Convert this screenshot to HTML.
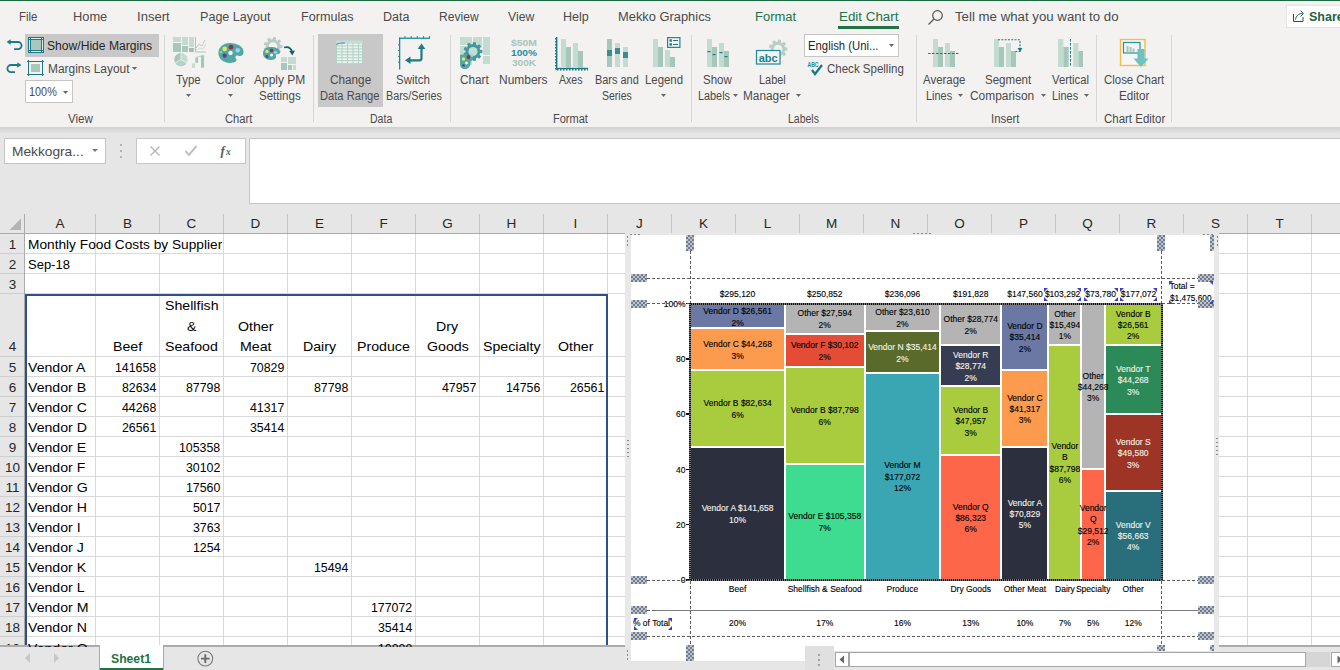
<!DOCTYPE html>
<html><head><meta charset="utf-8"><style>
html,body{margin:0;padding:0;width:1340px;height:670px;overflow:hidden;background:#f3f2f1}
.r{position:absolute;display:block}
.t{position:absolute;white-space:pre;font-family:"Liberation Sans",sans-serif;transform-origin:0 50%}
</style></head><body>
<div class="r" style="left:0px;top:0px;width:1340px;height:127px;background:#f3f2f1;"></div>
<div class="r" style="left:0px;top:0px;width:1340px;height:1px;background:#1e6b43;"></div>
<div class="r" style="left:0px;top:127px;width:1340px;height:87px;background:#e6e6e6;"></div>
<div class="r" style="left:0px;top:127px;width:1340px;height:7px;background:linear-gradient(#d0d0d0,#e6e6e6);"></div>
<div class="t" style="left:19.30px;top:11.00px;font-size:12.5px;line-height:12.5px;color:#4a4a4a;font-weight:normal;transform:scaleX(0.9129);">File</div>
<div class="t" style="left:73.40px;top:11.00px;font-size:12.5px;line-height:12.5px;color:#4a4a4a;font-weight:normal;transform:scaleX(1.0257);">Home</div>
<div class="t" style="left:137.30px;top:11.00px;font-size:12.5px;line-height:12.5px;color:#4a4a4a;font-weight:normal;transform:scaleX(1.0459);">Insert</div>
<div class="t" style="left:200.10px;top:11.00px;font-size:12.5px;line-height:12.5px;color:#4a4a4a;font-weight:normal;transform:scaleX(1.0057);">Page Layout</div>
<div class="t" style="left:300.90px;top:11.00px;font-size:12.5px;line-height:12.5px;color:#4a4a4a;font-weight:normal;transform:scaleX(1.0097);">Formulas</div>
<div class="t" style="left:383.00px;top:11.00px;font-size:12.5px;line-height:12.5px;color:#4a4a4a;font-weight:normal;transform:scaleX(1.0036);">Data</div>
<div class="t" style="left:439.30px;top:11.00px;font-size:12.5px;line-height:12.5px;color:#4a4a4a;font-weight:normal;transform:scaleX(0.9683);">Review</div>
<div class="t" style="left:507.50px;top:11.00px;font-size:12.5px;line-height:12.5px;color:#4a4a4a;font-weight:normal;transform:scaleX(0.9786);">View</div>
<div class="t" style="left:562.50px;top:11.00px;font-size:12.5px;line-height:12.5px;color:#4a4a4a;font-weight:normal;transform:scaleX(1.0032);">Help</div>
<div class="t" style="left:618.30px;top:11.00px;font-size:12.5px;line-height:12.5px;color:#4a4a4a;font-weight:normal;transform:scaleX(1.0298);">Mekko Graphics</div>
<div class="t" style="left:755.10px;top:11.00px;font-size:12.5px;line-height:12.5px;color:#217346;font-weight:normal;transform:scaleX(1.0380);">Format</div>
<div class="t" style="left:838.50px;top:11.00px;font-size:12.5px;line-height:12.5px;color:#217346;font-weight:normal;transform:scaleX(1.0703);">Edit Chart</div>
<div class="r" style="left:838px;top:26px;width:61px;height:3px;background:#217346;"></div>
<div class="t" style="left:954.50px;top:11.00px;font-size:12.5px;line-height:12.5px;color:#4a4a4a;font-weight:normal;transform:scaleX(1.0600);">Tell me what you want to do</div>
<svg class="r" style="left:927px;top:9px;" width="17" height="17" viewBox="0 0 17 17"><circle cx="10.5" cy="6.5" r="4.8" fill="none" stroke="#555" stroke-width="1.2"/><line x1="7" y1="10" x2="1.5" y2="15.5" stroke="#555" stroke-width="1.3"/></svg>
<div class="r" style="left:1286px;top:5px;width:59px;height:22.5px;background:#ffffff;border:1px solid #e4e4e4;box-sizing:border-box;"></div>
<svg class="r" style="left:1292px;top:9px;" width="14" height="14" viewBox="0 0 14 14"><path d="M1.5 5 V12.5 H11 V8" fill="none" stroke="#1e5e40" stroke-width="1"/><path d="M3.5 10.5 C4 7 6.5 4.5 10.5 4.5" fill="none" stroke="#1e5e40" stroke-width="1"/><path d="M8.5 1.5 L11.5 4.5 L8.5 7.5" fill="none" stroke="#1e5e40" stroke-width="1"/></svg>
<div class="t" style="left:1309.00px;top:11.00px;font-size:12.5px;line-height:12.5px;color:#1e6244;font-weight:bold;">Share</div>
<div class="r" style="left:163.5px;top:35px;width:1.0px;height:87px;background:#d6d6d6;"></div>
<div class="r" style="left:313px;top:35px;width:1px;height:87px;background:#d6d6d6;"></div>
<div class="r" style="left:449.6px;top:35px;width:1.0px;height:87px;background:#d6d6d6;"></div>
<div class="r" style="left:690.7px;top:35px;width:1.0px;height:87px;background:#d6d6d6;"></div>
<div class="r" style="left:915.5px;top:35px;width:1.0px;height:87px;background:#d6d6d6;"></div>
<div class="r" style="left:1096.4px;top:35px;width:1.0px;height:87px;background:#d6d6d6;"></div>
<div class="r" style="left:1171.3px;top:35px;width:1.0px;height:87px;background:#d6d6d6;"></div>
<div class="r" style="left:25px;top:34px;width:134px;height:23px;background:#c8c8c8;"></div>
<svg class="r" style="left:6px;top:39px;" width="17" height="12" viewBox="0 0 17 12"><path d="M3.5 3 H12 A3.6 3.6 0 0 1 12 10.2 H8" fill="none" stroke="#1c7a86" stroke-width="1.8"/><path d="M0.6 3 L4.6 0.3 V5.7 Z" fill="#1c7a86"/></svg>
<svg class="r" style="left:6px;top:62px;" width="17" height="12" viewBox="0 0 17 12"><path d="M12.5 3 H5 A3.6 3.6 0 0 0 5 10.2 H9" fill="none" stroke="#1c7a86" stroke-width="1.8"/><path d="M15.4 3 L11.4 0.3 V5.7 Z" fill="#1c7a86"/></svg>
<svg class="r" style="left:28px;top:37px;" width="16" height="16" viewBox="0 0 16 16"><rect x="0.5" y="0.5" width="15" height="15" fill="#d7eeee" stroke="#1c7a86" stroke-width="1"/><rect x="3" y="3" width="10" height="10" fill="#a8c8bb"/><line x1="0" y1="2.5" x2="16" y2="2.5" stroke="#1c7a86" stroke-width="1"/><line x1="0" y1="13.5" x2="16" y2="13.5" stroke="#1c7a86" stroke-width="1"/><line x1="2.5" y1="0" x2="2.5" y2="16" stroke="#1c7a86" stroke-width="1"/><line x1="13.5" y1="0" x2="13.5" y2="16" stroke="#1c7a86" stroke-width="1"/></svg>
<svg class="r" style="left:27px;top:60px;" width="17" height="16" viewBox="0 0 17 16"><rect x="4" y="4" width="9" height="8" fill="#a8c8bb"/><line x1="0" y1="1.5" x2="17" y2="1.5" stroke="#1c7a86" stroke-width="1"/><line x1="0" y1="14.5" x2="17" y2="14.5" stroke="#1c7a86" stroke-width="1"/><line x1="1.5" y1="0" x2="1.5" y2="16" stroke="#1c7a86" stroke-width="1"/><line x1="15.5" y1="0" x2="15.5" y2="16" stroke="#1c7a86" stroke-width="1"/></svg>
<div class="t" style="left:47.00px;top:40.00px;font-size:12px;line-height:12px;color:#262626;font-weight:normal;transform:scaleX(1.0092);">Show/Hide Margins</div>
<div class="t" style="left:47.50px;top:63.00px;font-size:12px;line-height:12px;color:#4a4a4a;font-weight:normal;transform:scaleX(0.9933);">Margins Layout</div>
<svg class="r" style="left:132.2px;top:67.0px;" width="5" height="3" viewBox="0 0 5 3"><path d="M0 0 H5 L2.5 3 Z" fill="#666"/></svg>
<div class="r" style="left:25px;top:80px;width:48px;height:23px;background:#ffffff;border:1px solid #c6c6c6;box-sizing:border-box;"></div>
<div class="t" style="left:28.50px;top:86.00px;font-size:12px;line-height:12px;color:#4a4a4a;font-weight:normal;transform:scaleX(0.9054);">100%</div>
<svg class="r" style="left:62.5px;top:90.5px;" width="5" height="3" viewBox="0 0 5 3"><path d="M0 0 H5 L2.5 3 Z" fill="#666"/></svg>
<div class="t" style="left:68.00px;top:113.00px;font-size:12px;line-height:12px;color:#4a4a4a;font-weight:normal;transform:scaleX(0.9614);">View</div>
<svg class="r" style="left:172px;top:36px;" width="34" height="34" viewBox="0 0 34 34"><rect x="1" y="1" width="8" height="5" fill="#c3dbd0"/><rect x="1" y="7" width="8" height="9" fill="#a6c8ba"/><rect x="10" y="1" width="6" height="8" fill="#c3dbd0"/><rect x="10" y="10" width="6" height="6" fill="#a6c8ba"/><rect x="17" y="1" width="5" height="10" fill="#c3dbd0"/><rect x="17" y="12" width="5" height="4" fill="#9fbfb1"/><path d="M23.5 1 V16 H34" fill="none" stroke="#a6c8ba" stroke-width="1"/><path d="M24 12 L27 8 L30 10 L33 4" fill="none" stroke="#a6c8ba" stroke-width="0.8"/><path d="M24 14 L28 12 L31 13 L34 8" fill="none" stroke="#c3dbd0" stroke-width="0.8"/><circle cx="9" cy="23.6" r="6.6" fill="#c3dbd0"/><path d="M9 23.6 L9 17 A6.6 6.6 0 0 0 3.3 26.9 Z" fill="#a6c8ba"/><path d="M9 23.6 L3.3 26.9 A6.6 6.6 0 0 0 14.7 26.9 Z" fill="#b3d1c4"/><path d="M9 17 V23.6 L3.3 26.9 M9 23.6 L14.7 26.9" stroke="#f3f2f1" stroke-width="0.8" fill="none"/><rect x="20" y="27.3" width="3" height="4.5" fill="#c3dbd0"/><rect x="23.3" y="21.3" width="2.8" height="5.5" fill="#a6c8ba"/><path d="M23.5 21 L29 19.3 V21 Z" fill="#c3dbd0"/><rect x="29" y="19.3" width="3.1" height="12.5" fill="#a6c8ba"/></svg>
<div class="t" style="left:176.40px;top:74.00px;font-size:12px;line-height:12px;color:#4a4a4a;font-weight:normal;transform:scaleX(0.9456);">Type</div>
<svg class="r" style="left:186.0px;top:94.0px;" width="5" height="3" viewBox="0 0 5 3"><path d="M0 0 H5 L2.5 3 Z" fill="#666"/></svg>
<svg class="r" style="left:216px;top:41px;transform:scale(0.9);transform-origin:15px 12px" width="30" height="24" viewBox="0 0 30 24"><path d="M14 1 C22 1 29 5 29 11 C29 15 26 16 23 15 C20 14 19 17 21 19 C22 21 19 23 14 23 C6 23 1 18 1 12 C1 6 6 1 14 1 Z" fill="#4fa8a2"/><circle cx="8" cy="7.5" r="2.6" fill="#e8e36a"/><circle cx="15" cy="5.5" r="2.6" fill="#9c2f3a"/><circle cx="22.5" cy="9" r="2.6" fill="#8fd5ef"/><circle cx="14.5" cy="12" r="2.4" fill="#ffffff"/><circle cx="8" cy="15" r="2.4" fill="#6a3a8c"/><circle cx="3.8" cy="11" r="1.6" fill="#8ed37f"/></svg>
<div class="t" style="left:216.40px;top:74.00px;font-size:12px;line-height:12px;color:#4a4a4a;font-weight:normal;transform:scaleX(0.9969);">Color</div>
<svg class="r" style="left:228.0px;top:94.0px;" width="5" height="3" viewBox="0 0 5 3"><path d="M0 0 H5 L2.5 3 Z" fill="#666"/></svg>
<svg class="r" style="left:262px;top:36px;" width="36" height="34" viewBox="0 0 36 34"><path d="M17.99 8.79 L20.39 9.05 L20.39 11.95 L17.99 12.21 L17.46 13.68 L19.13 15.42 L17.26 17.65 L15.26 16.31 L13.90 17.09 L14.06 19.49 L11.20 20.00 L10.53 17.68 L8.99 17.41 L7.56 19.36 L5.05 17.90 L6.02 15.70 L5.01 14.50 L2.68 15.08 L1.68 12.35 L3.84 11.28 L3.84 9.72 L1.68 8.65 L2.68 5.92 L5.01 6.50 L6.02 5.30 L5.05 3.10 L7.56 1.64 L8.99 3.59 L10.53 3.32 L11.20 1.00 L14.06 1.51 L13.90 3.91 L15.26 4.69 L17.26 3.35 L19.13 5.58 L17.46 7.32 Z" fill="#b7cdc4"/><circle cx="11" cy="10.5" r="4.2" fill="#f3f2f1"/><path d="M8.5 11 C14 11 18 13 18 16 C18 18 16 18.5 15 18 C14 18 13.5 19 14 20 C14.5 22.5 12 24 8.5 24 C4 24 1 21 1 17.5 C1 13.5 4 11 8.5 11 Z" fill="#4fa8a2"/><circle cx="5" cy="15.5" r="1.7" fill="#e8e36a"/><circle cx="9.5" cy="14.5" r="1.8" fill="#9c2f3a"/><circle cx="13.5" cy="16.3" r="1.6" fill="#8fd5ef"/><circle cx="9.5" cy="19" r="1.5" fill="#fff"/><circle cx="5" cy="20.5" r="1.4" fill="#6a3a8c"/><path d="M22 11.5 C26 10.5 29 12 30 16" fill="none" stroke="#1b5e6a" stroke-width="1.8"/><path d="M27.3 15 L30.3 19.5 L33 14.5 Z" fill="#1b5e6a"/><rect x="19" y="21" width="6" height="5" fill="#c3dbd0"/><rect x="26" y="21" width="8" height="7" fill="#c3dbd0"/><rect x="19" y="27" width="6" height="7" fill="#a6c8ba"/><rect x="26" y="29" width="4" height="5" fill="#a6c8ba"/><rect x="31" y="29" width="3" height="5" fill="#c3dbd0"/></svg>
<div class="t" style="left:254.30px;top:74.00px;font-size:12px;line-height:12px;color:#4a4a4a;font-weight:normal;transform:scaleX(0.9969);">Apply PM</div>
<div class="t" style="left:259.30px;top:90.00px;font-size:12px;line-height:12px;color:#4a4a4a;font-weight:normal;transform:scaleX(0.9617);">Settings</div>
<div class="t" style="left:224.50px;top:113.00px;font-size:12px;line-height:12px;color:#4a4a4a;font-weight:normal;transform:scaleX(0.9304);">Chart</div>
<div class="r" style="left:318px;top:34px;width:65px;height:73px;background:#c8c8c8;"></div>
<svg class="r" style="left:336px;top:40px;" width="28" height="25" viewBox="0 0 28 25"><rect x="0" y="0.5" width="27" height="23" fill="#b3d2c7"/><rect x="0" y="0.5" width="27" height="2.5" fill="#c5ddd3"/><rect x="1" y="3.50" width="4.5" height="1.9" fill="#e9f4ef"/><rect x="6.5" y="3.50" width="4.5" height="1.9" fill="#e9f4ef"/><rect x="12" y="3.50" width="4.5" height="1.9" fill="#e9f4ef"/><rect x="17.5" y="3.50" width="4.5" height="1.9" fill="#e9f4ef"/><rect x="23" y="3.50" width="3" height="1.9" fill="#e9f4ef"/><rect x="1" y="6.45" width="4.5" height="1.9" fill="#e9f4ef"/><rect x="6.5" y="6.45" width="4.5" height="1.9" fill="#e9f4ef"/><rect x="12" y="6.45" width="4.5" height="1.9" fill="#e9f4ef"/><rect x="17.5" y="6.45" width="4.5" height="1.9" fill="#e9f4ef"/><rect x="23" y="6.45" width="3" height="1.9" fill="#e9f4ef"/><rect x="1" y="9.40" width="4.5" height="1.9" fill="#e9f4ef"/><rect x="6.5" y="9.40" width="4.5" height="1.9" fill="#e9f4ef"/><rect x="12" y="9.40" width="4.5" height="1.9" fill="#e9f4ef"/><rect x="17.5" y="9.40" width="4.5" height="1.9" fill="#e9f4ef"/><rect x="23" y="9.40" width="3" height="1.9" fill="#e9f4ef"/><rect x="1" y="12.35" width="4.5" height="1.9" fill="#e9f4ef"/><rect x="6.5" y="12.35" width="4.5" height="1.9" fill="#e9f4ef"/><rect x="12" y="12.35" width="4.5" height="1.9" fill="#e9f4ef"/><rect x="17.5" y="12.35" width="4.5" height="1.9" fill="#e9f4ef"/><rect x="23" y="12.35" width="3" height="1.9" fill="#e9f4ef"/><rect x="1" y="15.30" width="4.5" height="1.9" fill="#e9f4ef"/><rect x="6.5" y="15.30" width="4.5" height="1.9" fill="#e9f4ef"/><rect x="12" y="15.30" width="4.5" height="1.9" fill="#e9f4ef"/><rect x="17.5" y="15.30" width="4.5" height="1.9" fill="#e9f4ef"/><rect x="23" y="15.30" width="3" height="1.9" fill="#e9f4ef"/><rect x="1" y="18.25" width="4.5" height="1.9" fill="#e9f4ef"/><rect x="6.5" y="18.25" width="4.5" height="1.9" fill="#e9f4ef"/><rect x="12" y="18.25" width="4.5" height="1.9" fill="#e9f4ef"/><rect x="17.5" y="18.25" width="4.5" height="1.9" fill="#e9f4ef"/><rect x="23" y="18.25" width="3" height="1.9" fill="#e9f4ef"/><rect x="1" y="21.20" width="4.5" height="1.9" fill="#e9f4ef"/><rect x="6.5" y="21.20" width="4.5" height="1.9" fill="#e9f4ef"/><rect x="12" y="21.20" width="4.5" height="1.9" fill="#e9f4ef"/><rect x="17.5" y="21.20" width="4.5" height="1.9" fill="#e9f4ef"/><rect x="23" y="21.20" width="3" height="1.9" fill="#e9f4ef"/><path d="M0.5 4.5 Q3 3 6 3 H9" stroke="#2f8fd0" stroke-width="1.2" fill="none"/></svg>
<div class="t" style="left:330.00px;top:74.00px;font-size:12px;line-height:12px;color:#4a4a4a;font-weight:normal;transform:scaleX(0.9799);">Change</div>
<div class="t" style="left:320.40px;top:90.00px;font-size:12px;line-height:12px;color:#4a4a4a;font-weight:normal;transform:scaleX(0.9290);">Data Range</div>
<svg class="r" style="left:398px;top:36px;" width="34" height="34" viewBox="0 0 34 34"><rect x="1" y="1.5" width="1.3" height="32" fill="#1a8e9c"/><rect x="1" y="1.6" width="31" height="1.3" fill="#1a8e9c"/><rect x="6.50" y="0" width="1" height="2" fill="#1a8e9c"/><rect x="12.65" y="0" width="1" height="2" fill="#1a8e9c"/><rect x="18.80" y="0" width="1" height="2" fill="#1a8e9c"/><rect x="24.95" y="0" width="1" height="2" fill="#1a8e9c"/><rect x="31.10" y="0" width="1" height="2" fill="#1a8e9c"/><rect x="0" y="8.30" width="2" height="1" fill="#1a8e9c"/><rect x="0" y="14.10" width="2" height="1" fill="#1a8e9c"/><rect x="0" y="19.90" width="2" height="1" fill="#1a8e9c"/><rect x="0" y="25.70" width="2" height="1" fill="#1a8e9c"/><path d="M10 24.3 H21.5 Q23.5 24.3 23.5 22.3 V11" fill="none" stroke="#1c7a86" stroke-width="2.2"/><path d="M7 24.3 L12.5 20.5 V28.1 Z" fill="#1c7a86"/><path d="M23.5 7.5 L19.7 13 H27.3 Z" fill="#1c7a86"/></svg>
<div class="t" style="left:396.30px;top:74.00px;font-size:12px;line-height:12px;color:#4a4a4a;font-weight:normal;transform:scaleX(0.9563);">Switch</div>
<div class="t" style="left:385.80px;top:90.00px;font-size:12px;line-height:12px;color:#4a4a4a;font-weight:normal;transform:scaleX(0.8995);">Bars/Series</div>
<div class="t" style="left:369.70px;top:113.00px;font-size:12px;line-height:12px;color:#4a4a4a;font-weight:normal;transform:scaleX(0.8794);">Data</div>
<svg class="r" style="left:459px;top:36px;" width="32" height="34" viewBox="0 0 32 34"><rect x="1" y="1" width="12" height="8" fill="#c3dbd0"/><rect x="14" y="1" width="9" height="11" fill="#c3dbd0"/><rect x="24" y="1" width="7" height="18" fill="#c3dbd0"/><rect x="24" y="20" width="7" height="8" fill="#c3dbd0"/><rect x="1" y="10" width="12" height="19" fill="#c3dbd0"/><path d="M21.09 13.76 L23.39 14.05 L23.39 16.95 L21.09 17.24 L20.55 18.73 L22.13 20.42 L20.26 22.65 L18.32 21.39 L16.94 22.18 L17.06 24.49 L14.20 25.00 L13.52 22.78 L11.96 22.51 L10.56 24.36 L8.05 22.90 L8.95 20.77 L7.93 19.56 L5.68 20.08 L4.68 17.35 L6.74 16.29 L6.74 14.71 L4.68 13.65 L5.68 10.92 L7.93 11.44 L8.95 10.23 L8.05 8.10 L10.56 6.64 L11.96 8.49 L13.52 8.22 L14.20 6.00 L17.06 6.51 L16.94 8.82 L18.32 9.61 L20.26 8.35 L22.13 10.58 L20.55 12.27 Z" fill="#3f9a9c"/><circle cx="14" cy="15.5" r="4.6" fill="#c5ddd3"/><path d="M1 19 C6 17 12 19 14 22 C15 24 13 25 12 25 C11 26 11.5 27 11.5 28 C11 31 9 33 6 33 C3 33 1 31 1 28 Z" fill="#4fa8a2"/><circle cx="4.5" cy="23" r="1.7" fill="#e8e36a"/><circle cx="9.5" cy="21" r="1.9" fill="#9c2f3a"/><circle cx="13" cy="19.5" r="1.5" fill="#8fd5ef"/><circle cx="7.5" cy="27" r="1.4" fill="#fff"/><circle cx="4.5" cy="29.5" r="1.3" fill="#6a3a8c"/></svg>
<div class="t" style="left:460.40px;top:74.00px;font-size:12px;line-height:12px;color:#4a4a4a;font-weight:normal;transform:scaleX(0.9781);">Chart</div>
<svg class="r" style="left:508px;top:38px;" width="32" height="30" viewBox="0 0 32 30"><text x="16" y="8" text-anchor="middle" font-family="Liberation Sans" font-weight="bold" font-size="8.5" fill="#a8c4ba" textLength="26" lengthAdjust="spacingAndGlyphs">$50M</text><text x="16" y="18" text-anchor="middle" font-family="Liberation Sans" font-weight="bold" font-size="8.5" fill="#1f8ea0" textLength="26" lengthAdjust="spacingAndGlyphs">100%</text><text x="16" y="28" text-anchor="middle" font-family="Liberation Sans" font-weight="bold" font-size="8.5" fill="#a8c4ba" textLength="24" lengthAdjust="spacingAndGlyphs">300K</text></svg>
<div class="t" style="left:498.50px;top:74.00px;font-size:12px;line-height:12px;color:#4a4a4a;font-weight:normal;transform:scaleX(0.9961);">Numbers</div>
<svg class="r" style="left:555px;top:37px;" width="33" height="34" viewBox="0 0 33 34"><rect x="1" y="0" width="1.4" height="32.5" fill="#1c7a86"/><rect x="1" y="30.8" width="32" height="1.4" fill="#1c7a86"/><rect x="2" y="32" width="1.5" height="1.5" fill="#1c7a86"/><rect x="5" y="32" width="1.5" height="1.5" fill="#1c7a86"/><rect x="8" y="32" width="1.5" height="1.5" fill="#1c7a86"/><rect x="11" y="32" width="1.5" height="1.5" fill="#1c7a86"/><rect x="14" y="32" width="1.5" height="1.5" fill="#1c7a86"/><rect x="17" y="32" width="1.5" height="1.5" fill="#1c7a86"/><rect x="20" y="32" width="1.5" height="1.5" fill="#1c7a86"/><rect x="23" y="32" width="1.5" height="1.5" fill="#1c7a86"/><rect x="26" y="32" width="1.5" height="1.5" fill="#1c7a86"/><rect x="29" y="32" width="1.5" height="1.5" fill="#1c7a86"/><rect x="32" y="32" width="1.5" height="1.5" fill="#1c7a86"/><rect x="0" y="1" width="1.5" height="1.5" fill="#1c7a86"/><rect x="0" y="4" width="1.5" height="1.5" fill="#1c7a86"/><rect x="0" y="7" width="1.5" height="1.5" fill="#1c7a86"/><rect x="0" y="10" width="1.5" height="1.5" fill="#1c7a86"/><rect x="0" y="13" width="1.5" height="1.5" fill="#1c7a86"/><rect x="0" y="16" width="1.5" height="1.5" fill="#1c7a86"/><rect x="0" y="19" width="1.5" height="1.5" fill="#1c7a86"/><rect x="0" y="22" width="1.5" height="1.5" fill="#1c7a86"/><rect x="0" y="25" width="1.5" height="1.5" fill="#1c7a86"/><rect x="0" y="28" width="1.5" height="1.5" fill="#1c7a86"/><rect x="0" y="31" width="1.5" height="1.5" fill="#1c7a86"/><rect x="6" y="2" width="5" height="29" fill="#c3dbd0"/><rect x="11" y="10" width="5" height="21" fill="#a6c8ba"/><rect x="18" y="6" width="5" height="25" fill="#c3dbd0"/><rect x="23" y="14" width="5" height="17" fill="#a6c8ba"/></svg>
<div class="t" style="left:559.30px;top:74.00px;font-size:12px;line-height:12px;color:#4a4a4a;font-weight:normal;transform:scaleX(0.8806);">Axes</div>
<svg class="r" style="left:606px;top:39px;" width="23" height="28" viewBox="0 0 23 28"><rect x="1" y="0" width="5" height="28" fill="#a6c8ba"/><rect x="1" y="11" width="5" height="6" fill="#3f8b93"/><rect x="9" y="4" width="5" height="24" fill="#c3dbd0"/><rect x="9" y="9" width="5" height="6" fill="#3f8b93"/><rect x="17" y="8" width="5" height="20" fill="#c3dbd0"/><rect x="17" y="13" width="5" height="6" fill="#3f8b93"/></svg>
<div class="t" style="left:594.80px;top:74.00px;font-size:12px;line-height:12px;color:#4a4a4a;font-weight:normal;transform:scaleX(0.9098);">Bars and</div>
<div class="t" style="left:602.00px;top:90.00px;font-size:12px;line-height:12px;color:#4a4a4a;font-weight:normal;transform:scaleX(0.8761);">Series</div>
<svg class="r" style="left:652px;top:36px;" width="30" height="32" viewBox="0 0 30 32"><rect x="1" y="3" width="5" height="28" fill="#c3dbd0"/><rect x="6" y="11" width="5" height="20" fill="#a6c8ba"/><rect x="13" y="14" width="5" height="17" fill="#c3dbd0"/><rect x="18" y="21" width="5" height="10" fill="#a6c8ba"/><rect x="15.6" y="1.6" width="12.3" height="9.8" fill="#f3f2f1" stroke="#1b8a9a" stroke-width="1.2"/><rect x="17.5" y="3.3" width="2.4" height="2.4" fill="#1c7a86"/><rect x="17.5" y="7.2" width="2.4" height="2.4" fill="#1c7a86"/><rect x="21" y="4" width="5" height="1" fill="#1c7a86"/><rect x="21" y="8" width="5" height="1" fill="#1c7a86"/></svg>
<div class="t" style="left:644.50px;top:74.00px;font-size:12px;line-height:12px;color:#4a4a4a;font-weight:normal;transform:scaleX(0.9489);">Legend</div>
<svg class="r" style="left:660.5px;top:94.0px;" width="5" height="3" viewBox="0 0 5 3"><path d="M0 0 H5 L2.5 3 Z" fill="#666"/></svg>
<div class="t" style="left:552.70px;top:113.00px;font-size:12px;line-height:12px;color:#4a4a4a;font-weight:normal;transform:scaleX(0.9180);">Format</div>
<svg class="r" style="left:706px;top:39px;" width="24" height="28" viewBox="0 0 24 28"><rect x="1" y="0" width="5" height="28" fill="#c3dbd0"/><rect x="6" y="8" width="5" height="20" fill="#a6c8ba"/><rect x="13" y="4" width="5" height="24" fill="#c3dbd0"/><rect x="18" y="12" width="5" height="16" fill="#a6c8ba"/><rect x="1.5" y="12" width="3" height="1.2" fill="#1c7a86"/><rect x="6.5" y="15" width="3" height="1.2" fill="#1c7a86"/><rect x="13.5" y="13" width="3" height="1.2" fill="#1c7a86"/><rect x="18.5" y="17" width="3" height="1.2" fill="#1c7a86"/></svg>
<div class="t" style="left:703.00px;top:74.00px;font-size:12px;line-height:12px;color:#4a4a4a;font-weight:normal;transform:scaleX(0.9590);">Show</div>
<div class="t" style="left:697.50px;top:90.00px;font-size:12px;line-height:12px;color:#4a4a4a;font-weight:normal;transform:scaleX(0.9046);">Labels</div>
<svg class="r" style="left:733.0px;top:94.0px;" width="5" height="3" viewBox="0 0 5 3"><path d="M0 0 H5 L2.5 3 Z" fill="#666"/></svg>
<svg class="r" style="left:755px;top:38px;" width="34" height="28" viewBox="0 0 34 28"><path d="M29.99 9.29 L32.39 9.55 L32.39 12.45 L29.99 12.71 L29.46 14.18 L31.13 15.92 L29.26 18.15 L27.26 16.81 L25.90 17.59 L26.06 19.99 L23.20 20.50 L22.53 18.18 L20.99 17.91 L19.56 19.86 L17.05 18.40 L18.02 16.20 L17.01 15.00 L14.68 15.58 L13.68 12.85 L15.84 11.78 L15.84 10.22 L13.68 9.15 L14.68 6.42 L17.01 7.00 L18.02 5.80 L17.05 3.60 L19.56 2.14 L20.99 4.09 L22.53 3.82 L23.20 1.50 L26.06 2.01 L25.90 4.41 L27.26 5.19 L29.26 3.85 L31.13 6.08 L29.46 7.82 Z" fill="#b9cdc6"/><circle cx="23" cy="11" r="4.3" fill="#f3f2f1"/><rect x="1.5" y="12.5" width="23.5" height="13.5" fill="#f3f2f1" stroke="#1b8a9a" stroke-width="1.2"/><text x="13.2" y="23.5" text-anchor="middle" font-family="Liberation Sans" font-weight="bold" font-size="11.5" fill="#1b7f8e" textLength="19" lengthAdjust="spacingAndGlyphs">abc</text></svg>
<div class="t" style="left:758.70px;top:74.00px;font-size:12px;line-height:12px;color:#4a4a4a;font-weight:normal;transform:scaleX(0.9123);">Label</div>
<div class="t" style="left:743.30px;top:90.00px;font-size:12px;line-height:12px;color:#4a4a4a;font-weight:normal;transform:scaleX(0.9858);">Manager</div>
<svg class="r" style="left:796.2px;top:94.0px;" width="5" height="3" viewBox="0 0 5 3"><path d="M0 0 H5 L2.5 3 Z" fill="#666"/></svg>
<div class="r" style="left:804px;top:34px;width:95px;height:23px;background:#ffffff;border:1px solid #c6c6c6;box-sizing:border-box;"></div>
<div class="t" style="left:807.50px;top:40.00px;font-size:12px;line-height:12px;color:#262626;font-weight:normal;transform:scaleX(0.9437);">English (Uni...</div>
<svg class="r" style="left:889.0px;top:44.0px;" width="5" height="3" viewBox="0 0 5 3"><path d="M0 0 H5 L2.5 3 Z" fill="#666"/></svg>
<svg class="r" style="left:807px;top:60px;" width="17" height="17" viewBox="0 0 17 17"><text x="0.5" y="6.5" font-family="Liberation Sans" font-weight="bold" font-size="7" fill="#1b8a9a" textLength="11" lengthAdjust="spacingAndGlyphs">ABC</text><path d="M5 10 L8 14 L15 5" fill="none" stroke="#1c7a86" stroke-width="2.3"/></svg>
<div class="t" style="left:826.60px;top:63.00px;font-size:12px;line-height:12px;color:#4a4a4a;font-weight:normal;transform:scaleX(0.9594);">Check Spelling</div>
<div class="t" style="left:787.50px;top:113.00px;font-size:12px;line-height:12px;color:#4a4a4a;font-weight:normal;transform:scaleX(0.8735);">Labels</div>
<svg class="r" style="left:927px;top:39px;" width="34" height="28" viewBox="0 0 34 28"><rect x="6" y="0" width="5" height="28" fill="#c3dbd0"/><rect x="11" y="8" width="5" height="20" fill="#a6c8ba"/><rect x="18" y="4" width="5" height="24" fill="#c3dbd0"/><rect x="23" y="12" width="5" height="16" fill="#a6c8ba"/><line x1="1" y1="14.5" x2="33" y2="14.5" stroke="#1c7a86" stroke-width="1.2" stroke-dasharray="2.5 1.5"/></svg>
<div class="t" style="left:922.70px;top:74.00px;font-size:12px;line-height:12px;color:#4a4a4a;font-weight:normal;transform:scaleX(0.9554);">Average</div>
<div class="t" style="left:925.70px;top:90.00px;font-size:12px;line-height:12px;color:#4a4a4a;font-weight:normal;transform:scaleX(0.9098);">Lines</div>
<svg class="r" style="left:958.2px;top:94.0px;" width="5" height="3" viewBox="0 0 5 3"><path d="M0 0 H5 L2.5 3 Z" fill="#666"/></svg>
<svg class="r" style="left:993px;top:39px;" width="30" height="28" viewBox="0 0 30 28"><rect x="1" y="0" width="5" height="28" fill="#c3dbd0"/><rect x="6" y="8" width="5" height="20" fill="#a6c8ba"/><rect x="13" y="4" width="5" height="24" fill="#c3dbd0"/><rect x="18" y="12" width="5" height="16" fill="#a6c8ba"/><path d="M5 0.8 H27 V12.5 H21" fill="none" stroke="#1c7a86" stroke-width="1.1" stroke-dasharray="2 1.3"/><path d="M24.5 9 L27 13 L29.5 9 Z" fill="#1c7a86"/></svg>
<div class="t" style="left:985.40px;top:74.00px;font-size:12px;line-height:12px;color:#4a4a4a;font-weight:normal;transform:scaleX(0.9619);">Segment</div>
<div class="t" style="left:970.40px;top:90.00px;font-size:12px;line-height:12px;color:#4a4a4a;font-weight:normal;transform:scaleX(0.9922);">Comparison</div>
<svg class="r" style="left:1040.8px;top:94.0px;" width="5" height="3" viewBox="0 0 5 3"><path d="M0 0 H5 L2.5 3 Z" fill="#666"/></svg>
<svg class="r" style="left:1057px;top:39px;" width="27" height="28" viewBox="0 0 27 28"><rect x="1" y="0" width="5.4" height="28" fill="#c3dbd0"/><rect x="6.4" y="8" width="5.2" height="20" fill="#a6c8ba"/><rect x="16.2" y="4" width="5.3" height="24" fill="#c3dbd0"/><rect x="21.5" y="12" width="4.5" height="16" fill="#a6c8ba"/><line x1="13.5" y1="0" x2="13.5" y2="28" stroke="#1c7a86" stroke-width="1" stroke-dasharray="2.5 1.5"/></svg>
<div class="t" style="left:1051.50px;top:74.00px;font-size:12px;line-height:12px;color:#4a4a4a;font-weight:normal;transform:scaleX(0.9375);">Vertical</div>
<div class="t" style="left:1051.50px;top:90.00px;font-size:12px;line-height:12px;color:#4a4a4a;font-weight:normal;transform:scaleX(0.9098);">Lines</div>
<svg class="r" style="left:1083.5px;top:94.0px;" width="5" height="3" viewBox="0 0 5 3"><path d="M0 0 H5 L2.5 3 Z" fill="#666"/></svg>
<div class="t" style="left:991.30px;top:113.00px;font-size:12px;line-height:12px;color:#4a4a4a;font-weight:normal;transform:scaleX(0.9462);">Insert</div>
<svg class="r" style="left:1119px;top:38px;" width="31" height="30" viewBox="0 0 31 30"><rect x="1.5" y="1.5" width="24.5" height="26" fill="#f6f6f6" stroke="#f2bd48" stroke-width="1.4"/><rect x="4.5" y="4.5" width="16.5" height="10.5" fill="#f3f3f3" stroke="#1f95a3" stroke-width="1.2"/><rect x="7.5" y="8" width="2" height="6" fill="#a6c8ba"/><rect x="10.5" y="9" width="2" height="5" fill="#a6c8ba"/><rect x="13.5" y="10.5" width="2" height="3.5" fill="#a6c8ba"/><rect x="18.5" y="11" width="7" height="10" fill="#6cc2bf"/><path d="M14.5 20.5 H29.5 L22 29 Z" fill="#6cc2bf"/></svg>
<div class="t" style="left:1103.60px;top:74.00px;font-size:12px;line-height:12px;color:#4a4a4a;font-weight:normal;transform:scaleX(0.9517);">Close Chart</div>
<div class="t" style="left:1118.50px;top:90.00px;font-size:12px;line-height:12px;color:#4a4a4a;font-weight:normal;transform:scaleX(0.9726);">Editor</div>
<div class="t" style="left:1103.60px;top:113.00px;font-size:12px;line-height:12px;color:#4a4a4a;font-weight:normal;transform:scaleX(0.9558);">Chart Editor</div>
<div class="r" style="left:4px;top:138px;width:102px;height:26px;background:#ffffff;border:1px solid #c6c6c6;box-sizing:border-box;"></div>
<div class="t" style="left:11.60px;top:145.00px;font-size:13.5px;line-height:13.5px;color:#4a4a4a;font-weight:normal;transform:scaleX(1.0166);">Mekkogra...</div>
<svg class="r" style="left:92.0px;top:149.0px;" width="6" height="3" viewBox="0 0 6 3"><path d="M0 0 H6 L3.0 3 Z" fill="#777"/></svg>
<div class="r" style="left:120px;top:144px;width:2px;height:2px;background:#b4b4b4;"></div>
<div class="r" style="left:120px;top:150px;width:2px;height:2px;background:#b4b4b4;"></div>
<div class="r" style="left:120px;top:156px;width:2px;height:2px;background:#b4b4b4;"></div>
<div class="r" style="left:136px;top:138px;width:110px;height:26px;background:#ffffff;border:1px solid #c6c6c6;box-sizing:border-box;"></div>
<svg class="r" style="left:149px;top:145px;" width="12" height="12" viewBox="0 0 12 12"><path d="M1.5 1.5 L10.5 10.5 M10.5 1.5 L1.5 10.5" stroke="#b4b4b4" stroke-width="1.3"/></svg>
<svg class="r" style="left:184px;top:144px;" width="14" height="13" viewBox="0 0 14 13"><path d="M1.5 7 L5 11 L12.5 2" fill="none" stroke="#c2c2c2" stroke-width="2"/></svg>
<svg class="r" style="left:219px;top:143px;" width="16" height="15" viewBox="0 0 16 15"><text x="1.5" y="11.5" font-family="Liberation Serif" font-style="italic" font-weight="bold" font-size="13" fill="#5a5a5a">f</text><text x="7" y="12" font-family="Liberation Serif" font-style="italic" font-weight="bold" font-size="9.5" fill="#5a5a5a">x</text></svg>
<div class="r" style="left:249px;top:138px;width:1092px;height:66px;background:#ffffff;border:1px solid #c6c6c6;box-sizing:border-box;"></div>
<div class="r" style="left:25px;top:234px;width:1315px;height:411px;background:#ffffff;"></div>
<div class="r" style="left:0px;top:214px;width:1340px;height:20px;background:#e6e6e6;"></div>
<div class="r" style="left:0px;top:234px;width:25px;height:411px;background:#e6e6e6;"></div>
<div class="r" style="left:0px;top:233px;width:1340px;height:1px;background:#ababab;"></div>
<div class="r" style="left:24px;top:214px;width:1px;height:431px;background:#ababab;"></div>
<svg class="r" style="left:8px;top:217px;" width="15" height="15" viewBox="0 0 15 15"><path d="M13 1.5 V13 H1.5 Z" fill="#b4b4b4"/></svg>
<div class="r" style="left:95px;top:214px;width:1px;height:19px;background:#c6c6c6;"></div>
<div class="r" style="left:95px;top:234px;width:1px;height:411px;background:#d9d9d9;"></div>
<div class="r" style="left:159px;top:214px;width:1px;height:19px;background:#c6c6c6;"></div>
<div class="r" style="left:159px;top:234px;width:1px;height:411px;background:#d9d9d9;"></div>
<div class="r" style="left:223px;top:214px;width:1px;height:19px;background:#c6c6c6;"></div>
<div class="r" style="left:223px;top:234px;width:1px;height:411px;background:#d9d9d9;"></div>
<div class="r" style="left:287px;top:214px;width:1px;height:19px;background:#c6c6c6;"></div>
<div class="r" style="left:287px;top:234px;width:1px;height:411px;background:#d9d9d9;"></div>
<div class="r" style="left:351px;top:214px;width:1px;height:19px;background:#c6c6c6;"></div>
<div class="r" style="left:351px;top:234px;width:1px;height:411px;background:#d9d9d9;"></div>
<div class="r" style="left:415px;top:214px;width:1px;height:19px;background:#c6c6c6;"></div>
<div class="r" style="left:415px;top:234px;width:1px;height:411px;background:#d9d9d9;"></div>
<div class="r" style="left:479px;top:214px;width:1px;height:19px;background:#c6c6c6;"></div>
<div class="r" style="left:479px;top:234px;width:1px;height:411px;background:#d9d9d9;"></div>
<div class="r" style="left:543px;top:214px;width:1px;height:19px;background:#c6c6c6;"></div>
<div class="r" style="left:543px;top:234px;width:1px;height:411px;background:#d9d9d9;"></div>
<div class="r" style="left:607px;top:214px;width:1px;height:19px;background:#c6c6c6;"></div>
<div class="r" style="left:607px;top:234px;width:1px;height:411px;background:#d9d9d9;"></div>
<div class="r" style="left:671px;top:214px;width:1px;height:19px;background:#c6c6c6;"></div>
<div class="r" style="left:671px;top:234px;width:1px;height:411px;background:#d9d9d9;"></div>
<div class="r" style="left:735px;top:214px;width:1px;height:19px;background:#c6c6c6;"></div>
<div class="r" style="left:735px;top:234px;width:1px;height:411px;background:#d9d9d9;"></div>
<div class="r" style="left:799px;top:214px;width:1px;height:19px;background:#c6c6c6;"></div>
<div class="r" style="left:799px;top:234px;width:1px;height:411px;background:#d9d9d9;"></div>
<div class="r" style="left:863px;top:214px;width:1px;height:19px;background:#c6c6c6;"></div>
<div class="r" style="left:863px;top:234px;width:1px;height:411px;background:#d9d9d9;"></div>
<div class="r" style="left:927px;top:214px;width:1px;height:19px;background:#c6c6c6;"></div>
<div class="r" style="left:927px;top:234px;width:1px;height:411px;background:#d9d9d9;"></div>
<div class="r" style="left:991px;top:214px;width:1px;height:19px;background:#c6c6c6;"></div>
<div class="r" style="left:991px;top:234px;width:1px;height:411px;background:#d9d9d9;"></div>
<div class="r" style="left:1055px;top:214px;width:1px;height:19px;background:#c6c6c6;"></div>
<div class="r" style="left:1055px;top:234px;width:1px;height:411px;background:#d9d9d9;"></div>
<div class="r" style="left:1119px;top:214px;width:1px;height:19px;background:#c6c6c6;"></div>
<div class="r" style="left:1119px;top:234px;width:1px;height:411px;background:#d9d9d9;"></div>
<div class="r" style="left:1183px;top:214px;width:1px;height:19px;background:#c6c6c6;"></div>
<div class="r" style="left:1183px;top:234px;width:1px;height:411px;background:#d9d9d9;"></div>
<div class="r" style="left:1247px;top:214px;width:1px;height:19px;background:#c6c6c6;"></div>
<div class="r" style="left:1247px;top:234px;width:1px;height:411px;background:#d9d9d9;"></div>
<div class="r" style="left:1311px;top:214px;width:1px;height:19px;background:#c6c6c6;"></div>
<div class="r" style="left:1311px;top:234px;width:1px;height:411px;background:#d9d9d9;"></div>
<div class="r" style="left:1375px;top:214px;width:1px;height:19px;background:#c6c6c6;"></div>
<div class="r" style="left:1375px;top:234px;width:1px;height:411px;background:#d9d9d9;"></div>
<div class="t" style="left:55.49px;top:217.00px;font-size:13.5px;line-height:13.5px;color:#262626;font-weight:normal;">A</div>
<div class="t" style="left:122.99px;top:217.00px;font-size:13.5px;line-height:13.5px;color:#262626;font-weight:normal;">B</div>
<div class="t" style="left:186.62px;top:217.00px;font-size:13.5px;line-height:13.5px;color:#262626;font-weight:normal;">C</div>
<div class="t" style="left:250.62px;top:217.00px;font-size:13.5px;line-height:13.5px;color:#262626;font-weight:normal;">D</div>
<div class="t" style="left:314.99px;top:217.00px;font-size:13.5px;line-height:13.5px;color:#262626;font-weight:normal;">E</div>
<div class="t" style="left:379.38px;top:217.00px;font-size:13.5px;line-height:13.5px;color:#262626;font-weight:normal;">F</div>
<div class="t" style="left:442.24px;top:217.00px;font-size:13.5px;line-height:13.5px;color:#262626;font-weight:normal;">G</div>
<div class="t" style="left:506.62px;top:217.00px;font-size:13.5px;line-height:13.5px;color:#262626;font-weight:normal;">H</div>
<div class="t" style="left:573.62px;top:217.00px;font-size:13.5px;line-height:13.5px;color:#262626;font-weight:normal;">I</div>
<div class="t" style="left:636.12px;top:217.00px;font-size:13.5px;line-height:13.5px;color:#262626;font-weight:normal;">J</div>
<div class="t" style="left:698.99px;top:217.00px;font-size:13.5px;line-height:13.5px;color:#262626;font-weight:normal;">K</div>
<div class="t" style="left:763.74px;top:217.00px;font-size:13.5px;line-height:13.5px;color:#262626;font-weight:normal;">L</div>
<div class="t" style="left:825.88px;top:217.00px;font-size:13.5px;line-height:13.5px;color:#262626;font-weight:normal;">M</div>
<div class="t" style="left:890.62px;top:217.00px;font-size:13.5px;line-height:13.5px;color:#262626;font-weight:normal;">N</div>
<div class="t" style="left:954.24px;top:217.00px;font-size:13.5px;line-height:13.5px;color:#262626;font-weight:normal;">O</div>
<div class="t" style="left:1018.99px;top:217.00px;font-size:13.5px;line-height:13.5px;color:#262626;font-weight:normal;">P</div>
<div class="t" style="left:1082.24px;top:217.00px;font-size:13.5px;line-height:13.5px;color:#262626;font-weight:normal;">Q</div>
<div class="t" style="left:1146.62px;top:217.00px;font-size:13.5px;line-height:13.5px;color:#262626;font-weight:normal;">R</div>
<div class="t" style="left:1210.99px;top:217.00px;font-size:13.5px;line-height:13.5px;color:#262626;font-weight:normal;">S</div>
<div class="t" style="left:1275.38px;top:217.00px;font-size:13.5px;line-height:13.5px;color:#262626;font-weight:normal;">T</div>
<div class="r" style="left:25px;top:253px;width:1315px;height:1px;background:#d9d9d9;"></div>
<div class="r" style="left:0px;top:253px;width:24px;height:1px;background:#cfcfcf;"></div>
<div class="r" style="left:25px;top:273px;width:1315px;height:1px;background:#d9d9d9;"></div>
<div class="r" style="left:0px;top:273px;width:24px;height:1px;background:#cfcfcf;"></div>
<div class="r" style="left:25px;top:293px;width:1315px;height:1px;background:#d9d9d9;"></div>
<div class="r" style="left:0px;top:293px;width:24px;height:1px;background:#cfcfcf;"></div>
<div class="r" style="left:25px;top:356px;width:1315px;height:1px;background:#d9d9d9;"></div>
<div class="r" style="left:0px;top:356px;width:24px;height:1px;background:#cfcfcf;"></div>
<div class="r" style="left:25px;top:376px;width:1315px;height:1px;background:#d9d9d9;"></div>
<div class="r" style="left:0px;top:376px;width:24px;height:1px;background:#cfcfcf;"></div>
<div class="r" style="left:25px;top:396px;width:1315px;height:1px;background:#d9d9d9;"></div>
<div class="r" style="left:0px;top:396px;width:24px;height:1px;background:#cfcfcf;"></div>
<div class="r" style="left:25px;top:416px;width:1315px;height:1px;background:#d9d9d9;"></div>
<div class="r" style="left:0px;top:416px;width:24px;height:1px;background:#cfcfcf;"></div>
<div class="r" style="left:25px;top:436px;width:1315px;height:1px;background:#d9d9d9;"></div>
<div class="r" style="left:0px;top:436px;width:24px;height:1px;background:#cfcfcf;"></div>
<div class="r" style="left:25px;top:456px;width:1315px;height:1px;background:#d9d9d9;"></div>
<div class="r" style="left:0px;top:456px;width:24px;height:1px;background:#cfcfcf;"></div>
<div class="r" style="left:25px;top:476px;width:1315px;height:1px;background:#d9d9d9;"></div>
<div class="r" style="left:0px;top:476px;width:24px;height:1px;background:#cfcfcf;"></div>
<div class="r" style="left:25px;top:496px;width:1315px;height:1px;background:#d9d9d9;"></div>
<div class="r" style="left:0px;top:496px;width:24px;height:1px;background:#cfcfcf;"></div>
<div class="r" style="left:25px;top:516px;width:1315px;height:1px;background:#d9d9d9;"></div>
<div class="r" style="left:0px;top:516px;width:24px;height:1px;background:#cfcfcf;"></div>
<div class="r" style="left:25px;top:536px;width:1315px;height:1px;background:#d9d9d9;"></div>
<div class="r" style="left:0px;top:536px;width:24px;height:1px;background:#cfcfcf;"></div>
<div class="r" style="left:25px;top:556px;width:1315px;height:1px;background:#d9d9d9;"></div>
<div class="r" style="left:0px;top:556px;width:24px;height:1px;background:#cfcfcf;"></div>
<div class="r" style="left:25px;top:576px;width:1315px;height:1px;background:#d9d9d9;"></div>
<div class="r" style="left:0px;top:576px;width:24px;height:1px;background:#cfcfcf;"></div>
<div class="r" style="left:25px;top:596px;width:1315px;height:1px;background:#d9d9d9;"></div>
<div class="r" style="left:0px;top:596px;width:24px;height:1px;background:#cfcfcf;"></div>
<div class="r" style="left:25px;top:616px;width:1315px;height:1px;background:#d9d9d9;"></div>
<div class="r" style="left:0px;top:616px;width:24px;height:1px;background:#cfcfcf;"></div>
<div class="r" style="left:25px;top:636px;width:1315px;height:1px;background:#d9d9d9;"></div>
<div class="r" style="left:0px;top:636px;width:24px;height:1px;background:#cfcfcf;"></div>
<div class="r" style="left:25px;top:656px;width:1315px;height:1px;background:#d9d9d9;"></div>
<div class="r" style="left:0px;top:656px;width:24px;height:1px;background:#cfcfcf;"></div>
<div class="t" style="left:8.74px;top:238.00px;font-size:13.5px;line-height:13.5px;color:#262626;font-weight:normal;">1</div>
<div class="t" style="left:8.74px;top:258.00px;font-size:13.5px;line-height:13.5px;color:#262626;font-weight:normal;">2</div>
<div class="t" style="left:8.74px;top:278.00px;font-size:13.5px;line-height:13.5px;color:#262626;font-weight:normal;">3</div>
<div class="t" style="left:8.74px;top:340.00px;font-size:13.5px;line-height:13.5px;color:#262626;font-weight:normal;">4</div>
<div class="t" style="left:8.74px;top:361.00px;font-size:13.5px;line-height:13.5px;color:#262626;font-weight:normal;">5</div>
<div class="t" style="left:8.74px;top:381.00px;font-size:13.5px;line-height:13.5px;color:#262626;font-weight:normal;">6</div>
<div class="t" style="left:8.74px;top:401.00px;font-size:13.5px;line-height:13.5px;color:#262626;font-weight:normal;">7</div>
<div class="t" style="left:8.74px;top:421.00px;font-size:13.5px;line-height:13.5px;color:#262626;font-weight:normal;">8</div>
<div class="t" style="left:8.74px;top:441.00px;font-size:13.5px;line-height:13.5px;color:#262626;font-weight:normal;">9</div>
<div class="t" style="left:4.98px;top:461.00px;font-size:13.5px;line-height:13.5px;color:#262626;font-weight:normal;">10</div>
<div class="t" style="left:5.49px;top:481.00px;font-size:13.5px;line-height:13.5px;color:#262626;font-weight:normal;">11</div>
<div class="t" style="left:4.98px;top:501.00px;font-size:13.5px;line-height:13.5px;color:#262626;font-weight:normal;">12</div>
<div class="t" style="left:4.98px;top:521.00px;font-size:13.5px;line-height:13.5px;color:#262626;font-weight:normal;">13</div>
<div class="t" style="left:4.98px;top:541.00px;font-size:13.5px;line-height:13.5px;color:#262626;font-weight:normal;">14</div>
<div class="t" style="left:4.98px;top:561.00px;font-size:13.5px;line-height:13.5px;color:#262626;font-weight:normal;">15</div>
<div class="t" style="left:4.98px;top:581.00px;font-size:13.5px;line-height:13.5px;color:#262626;font-weight:normal;">16</div>
<div class="t" style="left:4.98px;top:601.00px;font-size:13.5px;line-height:13.5px;color:#262626;font-weight:normal;">17</div>
<div class="t" style="left:4.98px;top:621.00px;font-size:13.5px;line-height:13.5px;color:#262626;font-weight:normal;">18</div>
<div class="t" style="left:4.98px;top:642.00px;font-size:13.5px;line-height:13.5px;color:#262626;font-weight:normal;">19</div>
<div class="r" style="left:96px;top:234px;width:126px;height:19px;background:#ffffff;"></div>
<div class="r" style="left:0px;top:645px;width:1340px;height:1.5px;background:#acacac;"></div>
<div class="t" style="left:27.80px;top:238.00px;font-size:13.5px;line-height:13.5px;color:#000;font-weight:normal;transform:scaleX(1.0149);">Monthly Food Costs by Supplier</div>
<div class="t" style="left:27.60px;top:258.00px;font-size:13.5px;line-height:13.5px;color:#000;font-weight:normal;transform:scaleX(0.9622);">Sep-18</div>
<div class="t" style="left:112.91px;top:340.00px;font-size:13.5px;line-height:13.5px;color:#000;font-weight:normal;transform:scaleX(1.0500);">Beef</div>
<div class="t" style="left:164.71px;top:299.00px;font-size:13.5px;line-height:13.5px;color:#000;font-weight:normal;transform:scaleX(1.0500);">Shellfish</div>
<div class="t" style="left:186.77px;top:320.00px;font-size:13.5px;line-height:13.5px;color:#000;font-weight:normal;transform:scaleX(1.0500);">&amp;</div>
<div class="t" style="left:165.09px;top:340.00px;font-size:13.5px;line-height:13.5px;color:#000;font-weight:normal;transform:scaleX(1.0500);">Seafood</div>
<div class="t" style="left:237.77px;top:320.00px;font-size:13.5px;line-height:13.5px;color:#000;font-weight:normal;transform:scaleX(1.0500);">Other</div>
<div class="t" style="left:239.74px;top:340.00px;font-size:13.5px;line-height:13.5px;color:#000;font-weight:normal;transform:scaleX(1.0500);">Meat</div>
<div class="t" style="left:302.95px;top:340.00px;font-size:13.5px;line-height:13.5px;color:#000;font-weight:normal;transform:scaleX(1.0500);">Dairy</div>
<div class="t" style="left:357.09px;top:340.00px;font-size:13.5px;line-height:13.5px;color:#000;font-weight:normal;transform:scaleX(1.0500);">Produce</div>
<div class="t" style="left:436.48px;top:320.00px;font-size:13.5px;line-height:13.5px;color:#000;font-weight:normal;transform:scaleX(1.0500);">Dry</div>
<div class="t" style="left:426.61px;top:340.00px;font-size:13.5px;line-height:13.5px;color:#000;font-weight:normal;transform:scaleX(1.0500);">Goods</div>
<div class="t" style="left:482.74px;top:340.00px;font-size:13.5px;line-height:13.5px;color:#000;font-weight:normal;transform:scaleX(1.0500);">Specialty</div>
<div class="t" style="left:557.77px;top:340.00px;font-size:13.5px;line-height:13.5px;color:#000;font-weight:normal;transform:scaleX(1.0500);">Other</div>
<div class="t" style="left:27.60px;top:361.00px;font-size:13.5px;line-height:13.5px;color:#000;font-weight:normal;transform:scaleX(1.0470);">Vendor A</div>
<div class="t" style="left:27.60px;top:381.00px;font-size:13.5px;line-height:13.5px;color:#000;font-weight:normal;transform:scaleX(1.0470);">Vendor B</div>
<div class="t" style="left:27.60px;top:401.00px;font-size:13.5px;line-height:13.5px;color:#000;font-weight:normal;transform:scaleX(1.0470);">Vendor C</div>
<div class="t" style="left:27.60px;top:421.00px;font-size:13.5px;line-height:13.5px;color:#000;font-weight:normal;transform:scaleX(1.0470);">Vendor D</div>
<div class="t" style="left:27.60px;top:441.00px;font-size:13.5px;line-height:13.5px;color:#000;font-weight:normal;transform:scaleX(1.0470);">Vendor E</div>
<div class="t" style="left:27.60px;top:461.00px;font-size:13.5px;line-height:13.5px;color:#000;font-weight:normal;transform:scaleX(1.0470);">Vendor F</div>
<div class="t" style="left:27.60px;top:481.00px;font-size:13.5px;line-height:13.5px;color:#000;font-weight:normal;transform:scaleX(1.0470);">Vendor G</div>
<div class="t" style="left:27.60px;top:501.00px;font-size:13.5px;line-height:13.5px;color:#000;font-weight:normal;transform:scaleX(1.0470);">Vendor H</div>
<div class="t" style="left:27.60px;top:521.00px;font-size:13.5px;line-height:13.5px;color:#000;font-weight:normal;transform:scaleX(1.0470);">Vendor I</div>
<div class="t" style="left:27.60px;top:541.00px;font-size:13.5px;line-height:13.5px;color:#000;font-weight:normal;transform:scaleX(1.0470);">Vendor J</div>
<div class="t" style="left:27.60px;top:561.00px;font-size:13.5px;line-height:13.5px;color:#000;font-weight:normal;transform:scaleX(1.0470);">Vendor K</div>
<div class="t" style="left:27.60px;top:581.00px;font-size:13.5px;line-height:13.5px;color:#000;font-weight:normal;transform:scaleX(1.0470);">Vendor L</div>
<div class="t" style="left:27.60px;top:601.00px;font-size:13.5px;line-height:13.5px;color:#000;font-weight:normal;transform:scaleX(1.0470);">Vendor M</div>
<div class="t" style="left:27.60px;top:621.00px;font-size:13.5px;line-height:13.5px;color:#000;font-weight:normal;transform:scaleX(1.0470);">Vendor N</div>
<div class="t" style="left:27.60px;top:642.00px;font-size:13.5px;line-height:13.5px;color:#000;font-weight:normal;transform:scaleX(1.0470);">Vendor O</div>
<div class="t" style="left:115.37px;top:361.00px;font-size:13.5px;line-height:13.5px;color:#000;font-weight:normal;transform:scaleX(0.9150);">141658</div>
<div class="t" style="left:250.24px;top:361.00px;font-size:13.5px;line-height:13.5px;color:#000;font-weight:normal;transform:scaleX(0.9150);">70829</div>
<div class="t" style="left:122.24px;top:381.00px;font-size:13.5px;line-height:13.5px;color:#000;font-weight:normal;transform:scaleX(0.9150);">82634</div>
<div class="t" style="left:186.24px;top:381.00px;font-size:13.5px;line-height:13.5px;color:#000;font-weight:normal;transform:scaleX(0.9150);">87798</div>
<div class="t" style="left:314.24px;top:381.00px;font-size:13.5px;line-height:13.5px;color:#000;font-weight:normal;transform:scaleX(0.9150);">87798</div>
<div class="t" style="left:442.24px;top:381.00px;font-size:13.5px;line-height:13.5px;color:#000;font-weight:normal;transform:scaleX(0.9150);">47957</div>
<div class="t" style="left:506.24px;top:381.00px;font-size:13.5px;line-height:13.5px;color:#000;font-weight:normal;transform:scaleX(0.9150);">14756</div>
<div class="t" style="left:570.24px;top:381.00px;font-size:13.5px;line-height:13.5px;color:#000;font-weight:normal;transform:scaleX(0.9150);">26561</div>
<div class="t" style="left:122.24px;top:401.00px;font-size:13.5px;line-height:13.5px;color:#000;font-weight:normal;transform:scaleX(0.9150);">44268</div>
<div class="t" style="left:250.24px;top:401.00px;font-size:13.5px;line-height:13.5px;color:#000;font-weight:normal;transform:scaleX(0.9150);">41317</div>
<div class="t" style="left:122.24px;top:421.00px;font-size:13.5px;line-height:13.5px;color:#000;font-weight:normal;transform:scaleX(0.9150);">26561</div>
<div class="t" style="left:250.24px;top:421.00px;font-size:13.5px;line-height:13.5px;color:#000;font-weight:normal;transform:scaleX(0.9150);">35414</div>
<div class="t" style="left:179.37px;top:441.00px;font-size:13.5px;line-height:13.5px;color:#000;font-weight:normal;transform:scaleX(0.9150);">105358</div>
<div class="t" style="left:186.24px;top:461.00px;font-size:13.5px;line-height:13.5px;color:#000;font-weight:normal;transform:scaleX(0.9150);">30102</div>
<div class="t" style="left:186.24px;top:481.00px;font-size:13.5px;line-height:13.5px;color:#000;font-weight:normal;transform:scaleX(0.9150);">17560</div>
<div class="t" style="left:193.11px;top:501.00px;font-size:13.5px;line-height:13.5px;color:#000;font-weight:normal;transform:scaleX(0.9150);">5017</div>
<div class="t" style="left:193.11px;top:521.00px;font-size:13.5px;line-height:13.5px;color:#000;font-weight:normal;transform:scaleX(0.9150);">3763</div>
<div class="t" style="left:193.11px;top:541.00px;font-size:13.5px;line-height:13.5px;color:#000;font-weight:normal;transform:scaleX(0.9150);">1254</div>
<div class="t" style="left:314.24px;top:561.00px;font-size:13.5px;line-height:13.5px;color:#000;font-weight:normal;transform:scaleX(0.9150);">15494</div>
<div class="t" style="left:371.37px;top:601.00px;font-size:13.5px;line-height:13.5px;color:#000;font-weight:normal;transform:scaleX(0.9150);">177072</div>
<div class="t" style="left:378.24px;top:621.00px;font-size:13.5px;line-height:13.5px;color:#000;font-weight:normal;transform:scaleX(0.9150);">35414</div>
<div class="t" style="left:378.24px;top:642.00px;font-size:13.5px;line-height:13.5px;color:#000;font-weight:normal;transform:scaleX(0.9150);">10888</div>
<div class="r" style="left:25px;top:294px;width:582px;height:2px;background:#2f4e8a;"></div>
<div class="r" style="left:25px;top:294px;width:2px;height:351px;background:#2f4e8a;"></div>
<div class="r" style="left:606px;top:294px;width:2px;height:351px;background:#2f4e8a;"></div>
<div class="r" style="left:625px;top:233px;width:594px;height:432px;background:#e8e8e8;"></div>
<div class="r" style="left:631px;top:235px;width:583px;height:426px;background:#ffffff;"></div>
<div class="r" style="left:691px;top:304px;width:93px;height:23px;background:#6b78a3;"></div>
<div class="r" style="left:691px;top:329px;width:93px;height:40px;background:#fc9a4e;"></div>
<div class="r" style="left:691px;top:371px;width:93px;height:75px;background:#a9cc3f;"></div>
<div class="r" style="left:691px;top:448px;width:93px;height:131px;background:#2c2f3d;"></div>
<div class="r" style="left:786px;top:304px;width:78px;height:29px;background:#b4b4b4;"></div>
<div class="r" style="left:786px;top:335px;width:78px;height:31px;background:#e54c35;"></div>
<div class="r" style="left:786px;top:368px;width:78px;height:95px;background:#a9cc3f;"></div>
<div class="r" style="left:786px;top:465px;width:78px;height:114px;background:#3edc91;"></div>
<div class="r" style="left:866px;top:304px;width:73px;height:26px;background:#b4b4b4;"></div>
<div class="r" style="left:866px;top:332px;width:73px;height:40px;background:#5a6a2a;"></div>
<div class="r" style="left:866px;top:374px;width:73px;height:205px;background:#3aa6b4;"></div>
<div class="r" style="left:941px;top:304px;width:59px;height:40px;background:#b4b4b4;"></div>
<div class="r" style="left:941px;top:346px;width:59px;height:39px;background:#363c52;"></div>
<div class="r" style="left:941px;top:387px;width:59px;height:67px;background:#a9cc3f;"></div>
<div class="r" style="left:941px;top:456px;width:59px;height:123px;background:#fe664a;"></div>
<div class="r" style="left:1002px;top:304px;width:45px;height:65px;background:#6b78a3;"></div>
<div class="r" style="left:1002px;top:371px;width:45px;height:75px;background:#fc9a4e;"></div>
<div class="r" style="left:1002px;top:448px;width:45px;height:131px;background:#2c2f3d;"></div>
<div class="r" style="left:1049px;top:304px;width:31px;height:40px;background:#b4b4b4;"></div>
<div class="r" style="left:1049px;top:346px;width:31px;height:233px;background:#a9cc3f;"></div>
<div class="r" style="left:1082px;top:304px;width:22px;height:164px;background:#b4b4b4;"></div>
<div class="r" style="left:1082px;top:470px;width:22px;height:109px;background:#fe664a;"></div>
<div class="r" style="left:1106px;top:304px;width:55px;height:40px;background:#a9cc3f;"></div>
<div class="r" style="left:1106px;top:346px;width:55px;height:67px;background:#2b8a58;"></div>
<div class="r" style="left:1106px;top:415px;width:55px;height:75px;background:#9d3426;"></div>
<div class="r" style="left:1106px;top:492px;width:55px;height:87px;background:#296f7b;"></div>
<div class="t" style="left:703.33px;top:307.00px;font-size:8.5px;line-height:8.5px;color:#000000;font-weight:normal;-webkit-text-stroke:0.12px currentColor;">Vendor D $26,561</div>
<div class="t" style="left:731.45px;top:319.00px;font-size:8.5px;line-height:8.5px;color:#000000;font-weight:normal;-webkit-text-stroke:0.12px currentColor;">2%</div>
<div class="t" style="left:703.33px;top:340.00px;font-size:8.5px;line-height:8.5px;color:#000000;font-weight:normal;-webkit-text-stroke:0.12px currentColor;">Vendor C $44,268</div>
<div class="t" style="left:731.45px;top:352.00px;font-size:8.5px;line-height:8.5px;color:#000000;font-weight:normal;-webkit-text-stroke:0.12px currentColor;">3%</div>
<div class="t" style="left:703.57px;top:399.00px;font-size:8.5px;line-height:8.5px;color:#000000;font-weight:normal;-webkit-text-stroke:0.12px currentColor;">Vendor B $82,634</div>
<div class="t" style="left:731.45px;top:411.00px;font-size:8.5px;line-height:8.5px;color:#000000;font-weight:normal;-webkit-text-stroke:0.12px currentColor;">6%</div>
<div class="t" style="left:701.67px;top:504.00px;font-size:8.5px;line-height:8.5px;color:#f2f2ea;font-weight:normal;-webkit-text-stroke:0.12px currentColor;">Vendor A $141,658</div>
<div class="t" style="left:729.09px;top:516.00px;font-size:8.5px;line-height:8.5px;color:#f2f2ea;font-weight:normal;-webkit-text-stroke:0.12px currentColor;">10%</div>
<div class="t" style="left:719.87px;top:290.00px;font-size:8.5px;line-height:8.5px;color:#000000;font-weight:normal;-webkit-text-stroke:0.12px currentColor;">$295,120</div>
<div class="t" style="left:728.85px;top:585.00px;font-size:8.5px;line-height:8.5px;color:#000000;font-weight:normal;-webkit-text-stroke:0.12px currentColor;">Beef</div>
<div class="t" style="left:729.09px;top:619.00px;font-size:8.5px;line-height:8.5px;color:#000000;font-weight:normal;-webkit-text-stroke:0.12px currentColor;">20%</div>
<div class="t" style="left:797.56px;top:309.00px;font-size:8.5px;line-height:8.5px;color:#000000;font-weight:normal;-webkit-text-stroke:0.12px currentColor;">Other $27,594</div>
<div class="t" style="left:818.59px;top:321.00px;font-size:8.5px;line-height:8.5px;color:#000000;font-weight:normal;-webkit-text-stroke:0.12px currentColor;">2%</div>
<div class="t" style="left:790.94px;top:341.00px;font-size:8.5px;line-height:8.5px;color:#000000;font-weight:normal;-webkit-text-stroke:0.12px currentColor;">Vendor F $30,102</div>
<div class="t" style="left:818.59px;top:353.00px;font-size:8.5px;line-height:8.5px;color:#000000;font-weight:normal;-webkit-text-stroke:0.12px currentColor;">2%</div>
<div class="t" style="left:790.70px;top:406.00px;font-size:8.5px;line-height:8.5px;color:#000000;font-weight:normal;-webkit-text-stroke:0.12px currentColor;">Vendor B $87,798</div>
<div class="t" style="left:818.59px;top:418.00px;font-size:8.5px;line-height:8.5px;color:#000000;font-weight:normal;-webkit-text-stroke:0.12px currentColor;">6%</div>
<div class="t" style="left:788.34px;top:512.00px;font-size:8.5px;line-height:8.5px;color:#000000;font-weight:normal;-webkit-text-stroke:0.12px currentColor;">Vendor E $105,358</div>
<div class="t" style="left:818.59px;top:524.00px;font-size:8.5px;line-height:8.5px;color:#000000;font-weight:normal;-webkit-text-stroke:0.12px currentColor;">7%</div>
<div class="t" style="left:807.01px;top:290.00px;font-size:8.5px;line-height:8.5px;color:#000000;font-weight:normal;-webkit-text-stroke:0.12px currentColor;">$250,852</div>
<div class="t" style="left:787.63px;top:585.00px;font-size:8.5px;line-height:8.5px;color:#000000;font-weight:normal;-webkit-text-stroke:0.12px currentColor;">Shellfish &amp; Seafood</div>
<div class="t" style="left:816.23px;top:619.00px;font-size:8.5px;line-height:8.5px;color:#000000;font-weight:normal;-webkit-text-stroke:0.12px currentColor;">17%</div>
<div class="t" style="left:875.27px;top:308.00px;font-size:8.5px;line-height:8.5px;color:#000000;font-weight:normal;-webkit-text-stroke:0.12px currentColor;">Other $23,610</div>
<div class="t" style="left:896.30px;top:320.00px;font-size:8.5px;line-height:8.5px;color:#000000;font-weight:normal;-webkit-text-stroke:0.12px currentColor;">2%</div>
<div class="t" style="left:868.18px;top:343.00px;font-size:8.5px;line-height:8.5px;color:#f2f2ea;font-weight:normal;-webkit-text-stroke:0.12px currentColor;">Vendor N $35,414</div>
<div class="t" style="left:896.30px;top:355.00px;font-size:8.5px;line-height:8.5px;color:#f2f2ea;font-weight:normal;-webkit-text-stroke:0.12px currentColor;">2%</div>
<div class="t" style="left:884.25px;top:461.00px;font-size:8.5px;line-height:8.5px;color:#000000;font-weight:normal;-webkit-text-stroke:0.12px currentColor;">Vendor M</div>
<div class="t" style="left:884.72px;top:473.00px;font-size:8.5px;line-height:8.5px;color:#000000;font-weight:normal;-webkit-text-stroke:0.12px currentColor;">$177,072</div>
<div class="t" style="left:893.94px;top:484.00px;font-size:8.5px;line-height:8.5px;color:#000000;font-weight:normal;-webkit-text-stroke:0.12px currentColor;">12%</div>
<div class="t" style="left:884.72px;top:290.00px;font-size:8.5px;line-height:8.5px;color:#000000;font-weight:normal;-webkit-text-stroke:0.12px currentColor;">$236,096</div>
<div class="t" style="left:886.61px;top:585.00px;font-size:8.5px;line-height:8.5px;color:#000000;font-weight:normal;-webkit-text-stroke:0.12px currentColor;">Produce</div>
<div class="t" style="left:893.94px;top:619.00px;font-size:8.5px;line-height:8.5px;color:#000000;font-weight:normal;-webkit-text-stroke:0.12px currentColor;">16%</div>
<div class="t" style="left:943.57px;top:315.00px;font-size:8.5px;line-height:8.5px;color:#000000;font-weight:normal;-webkit-text-stroke:0.12px currentColor;">Other $28,774</div>
<div class="t" style="left:964.60px;top:327.00px;font-size:8.5px;line-height:8.5px;color:#000000;font-weight:normal;-webkit-text-stroke:0.12px currentColor;">2%</div>
<div class="t" style="left:953.02px;top:351.00px;font-size:8.5px;line-height:8.5px;color:#f2f2ea;font-weight:normal;-webkit-text-stroke:0.12px currentColor;">Vendor R</div>
<div class="t" style="left:955.38px;top:362.00px;font-size:8.5px;line-height:8.5px;color:#f2f2ea;font-weight:normal;-webkit-text-stroke:0.12px currentColor;">$28,774</div>
<div class="t" style="left:964.60px;top:374.00px;font-size:8.5px;line-height:8.5px;color:#f2f2ea;font-weight:normal;-webkit-text-stroke:0.12px currentColor;">2%</div>
<div class="t" style="left:953.25px;top:406.00px;font-size:8.5px;line-height:8.5px;color:#000000;font-weight:normal;-webkit-text-stroke:0.12px currentColor;">Vendor B</div>
<div class="t" style="left:955.38px;top:417.00px;font-size:8.5px;line-height:8.5px;color:#000000;font-weight:normal;-webkit-text-stroke:0.12px currentColor;">$47,957</div>
<div class="t" style="left:964.60px;top:429.00px;font-size:8.5px;line-height:8.5px;color:#000000;font-weight:normal;-webkit-text-stroke:0.12px currentColor;">3%</div>
<div class="t" style="left:952.78px;top:503.00px;font-size:8.5px;line-height:8.5px;color:#000000;font-weight:normal;-webkit-text-stroke:0.12px currentColor;">Vendor Q</div>
<div class="t" style="left:955.38px;top:514.00px;font-size:8.5px;line-height:8.5px;color:#000000;font-weight:normal;-webkit-text-stroke:0.12px currentColor;">$86,323</div>
<div class="t" style="left:964.60px;top:525.00px;font-size:8.5px;line-height:8.5px;color:#000000;font-weight:normal;-webkit-text-stroke:0.12px currentColor;">6%</div>
<div class="t" style="left:953.02px;top:290.00px;font-size:8.5px;line-height:8.5px;color:#000000;font-weight:normal;-webkit-text-stroke:0.12px currentColor;">$191,828</div>
<div class="t" style="left:950.43px;top:585.00px;font-size:8.5px;line-height:8.5px;color:#000000;font-weight:normal;-webkit-text-stroke:0.12px currentColor;">Dry Goods</div>
<div class="t" style="left:962.24px;top:619.00px;font-size:8.5px;line-height:8.5px;color:#000000;font-weight:normal;-webkit-text-stroke:0.12px currentColor;">13%</div>
<div class="t" style="left:1007.18px;top:322.00px;font-size:8.5px;line-height:8.5px;color:#000000;font-weight:normal;-webkit-text-stroke:0.12px currentColor;">Vendor D</div>
<div class="t" style="left:1009.54px;top:333.00px;font-size:8.5px;line-height:8.5px;color:#000000;font-weight:normal;-webkit-text-stroke:0.12px currentColor;">$35,414</div>
<div class="t" style="left:1018.76px;top:345.00px;font-size:8.5px;line-height:8.5px;color:#000000;font-weight:normal;-webkit-text-stroke:0.12px currentColor;">2%</div>
<div class="t" style="left:1007.18px;top:394.00px;font-size:8.5px;line-height:8.5px;color:#000000;font-weight:normal;-webkit-text-stroke:0.12px currentColor;">Vendor C</div>
<div class="t" style="left:1009.54px;top:405.00px;font-size:8.5px;line-height:8.5px;color:#000000;font-weight:normal;-webkit-text-stroke:0.12px currentColor;">$41,317</div>
<div class="t" style="left:1018.76px;top:416.00px;font-size:8.5px;line-height:8.5px;color:#000000;font-weight:normal;-webkit-text-stroke:0.12px currentColor;">3%</div>
<div class="t" style="left:1007.65px;top:499.00px;font-size:8.5px;line-height:8.5px;color:#f2f2ea;font-weight:normal;-webkit-text-stroke:0.12px currentColor;">Vendor A</div>
<div class="t" style="left:1009.54px;top:510.00px;font-size:8.5px;line-height:8.5px;color:#f2f2ea;font-weight:normal;-webkit-text-stroke:0.12px currentColor;">$70,829</div>
<div class="t" style="left:1018.76px;top:521.00px;font-size:8.5px;line-height:8.5px;color:#f2f2ea;font-weight:normal;-webkit-text-stroke:0.12px currentColor;">5%</div>
<div class="t" style="left:1007.18px;top:290.00px;font-size:8.5px;line-height:8.5px;color:#000000;font-weight:normal;-webkit-text-stroke:0.12px currentColor;">$147,560</div>
<div class="t" style="left:1003.64px;top:585.00px;font-size:8.5px;line-height:8.5px;color:#000000;font-weight:normal;-webkit-text-stroke:0.12px currentColor;">Other Meat</div>
<div class="t" style="left:1016.40px;top:619.00px;font-size:8.5px;line-height:8.5px;color:#000000;font-weight:normal;-webkit-text-stroke:0.12px currentColor;">10%</div>
<div class="t" style="left:1054.31px;top:310.00px;font-size:8.5px;line-height:8.5px;color:#000000;font-weight:normal;-webkit-text-stroke:0.12px currentColor;">Other</div>
<div class="t" style="left:1049.58px;top:321.00px;font-size:8.5px;line-height:8.5px;color:#000000;font-weight:normal;-webkit-text-stroke:0.12px currentColor;">$15,494</div>
<div class="t" style="left:1058.80px;top:332.00px;font-size:8.5px;line-height:8.5px;color:#000000;font-weight:normal;-webkit-text-stroke:0.12px currentColor;">1%</div>
<div class="t" style="left:1051.47px;top:442.00px;font-size:8.5px;line-height:8.5px;color:#000000;font-weight:normal;-webkit-text-stroke:0.12px currentColor;">Vendor</div>
<div class="t" style="left:1062.11px;top:453.00px;font-size:8.5px;line-height:8.5px;color:#000000;font-weight:normal;-webkit-text-stroke:0.12px currentColor;">B</div>
<div class="t" style="left:1049.58px;top:465.00px;font-size:8.5px;line-height:8.5px;color:#000000;font-weight:normal;-webkit-text-stroke:0.12px currentColor;">$87,798</div>
<div class="t" style="left:1058.80px;top:476.00px;font-size:8.5px;line-height:8.5px;color:#000000;font-weight:normal;-webkit-text-stroke:0.12px currentColor;">6%</div>
<div class="t" style="left:1044.90px;top:290.00px;font-size:8.5px;line-height:8.5px;color:#000000;font-weight:normal;-webkit-text-stroke:0.12px currentColor;">$103,292</div>
<div class="t" style="left:1055.02px;top:585.00px;font-size:8.5px;line-height:8.5px;color:#000000;font-weight:normal;-webkit-text-stroke:0.12px currentColor;">Dairy</div>
<div class="t" style="left:1058.80px;top:619.00px;font-size:8.5px;line-height:8.5px;color:#000000;font-weight:normal;-webkit-text-stroke:0.12px currentColor;">7%</div>
<div class="t" style="left:1082.57px;top:372.00px;font-size:8.5px;line-height:8.5px;color:#000000;font-weight:normal;-webkit-text-stroke:0.12px currentColor;">Other</div>
<div class="t" style="left:1077.84px;top:383.00px;font-size:8.5px;line-height:8.5px;color:#000000;font-weight:normal;-webkit-text-stroke:0.12px currentColor;">$44,268</div>
<div class="t" style="left:1087.06px;top:394.00px;font-size:8.5px;line-height:8.5px;color:#000000;font-weight:normal;-webkit-text-stroke:0.12px currentColor;">3%</div>
<div class="t" style="left:1079.73px;top:504.00px;font-size:8.5px;line-height:8.5px;color:#000000;font-weight:normal;-webkit-text-stroke:0.12px currentColor;">Vendor</div>
<div class="t" style="left:1089.89px;top:515.00px;font-size:8.5px;line-height:8.5px;color:#000000;font-weight:normal;-webkit-text-stroke:0.12px currentColor;">Q</div>
<div class="t" style="left:1077.84px;top:527.00px;font-size:8.5px;line-height:8.5px;color:#000000;font-weight:normal;-webkit-text-stroke:0.12px currentColor;">$29,512</div>
<div class="t" style="left:1087.06px;top:538.00px;font-size:8.5px;line-height:8.5px;color:#000000;font-weight:normal;-webkit-text-stroke:0.12px currentColor;">2%</div>
<div class="t" style="left:1085.30px;top:290.00px;font-size:8.5px;line-height:8.5px;color:#000000;font-weight:normal;-webkit-text-stroke:0.12px currentColor;">$73,780</div>
<div class="t" style="left:1075.95px;top:585.00px;font-size:8.5px;line-height:8.5px;color:#000000;font-weight:normal;-webkit-text-stroke:0.12px currentColor;">Specialty</div>
<div class="t" style="left:1087.06px;top:619.00px;font-size:8.5px;line-height:8.5px;color:#000000;font-weight:normal;-webkit-text-stroke:0.12px currentColor;">5%</div>
<div class="t" style="left:1115.75px;top:310.00px;font-size:8.5px;line-height:8.5px;color:#000000;font-weight:normal;-webkit-text-stroke:0.12px currentColor;">Vendor B</div>
<div class="t" style="left:1117.87px;top:321.00px;font-size:8.5px;line-height:8.5px;color:#000000;font-weight:normal;-webkit-text-stroke:0.12px currentColor;">$26,561</div>
<div class="t" style="left:1127.09px;top:332.00px;font-size:8.5px;line-height:8.5px;color:#000000;font-weight:normal;-webkit-text-stroke:0.12px currentColor;">2%</div>
<div class="t" style="left:1116.07px;top:365.00px;font-size:8.5px;line-height:8.5px;color:#f2f2ea;font-weight:normal;-webkit-text-stroke:0.12px currentColor;">Vendor T</div>
<div class="t" style="left:1117.87px;top:376.00px;font-size:8.5px;line-height:8.5px;color:#f2f2ea;font-weight:normal;-webkit-text-stroke:0.12px currentColor;">$44,268</div>
<div class="t" style="left:1127.09px;top:388.00px;font-size:8.5px;line-height:8.5px;color:#f2f2ea;font-weight:normal;-webkit-text-stroke:0.12px currentColor;">3%</div>
<div class="t" style="left:1115.75px;top:438.00px;font-size:8.5px;line-height:8.5px;color:#f2f2ea;font-weight:normal;-webkit-text-stroke:0.12px currentColor;">Vendor S</div>
<div class="t" style="left:1117.87px;top:449.00px;font-size:8.5px;line-height:8.5px;color:#f2f2ea;font-weight:normal;-webkit-text-stroke:0.12px currentColor;">$49,580</div>
<div class="t" style="left:1127.09px;top:461.00px;font-size:8.5px;line-height:8.5px;color:#f2f2ea;font-weight:normal;-webkit-text-stroke:0.12px currentColor;">3%</div>
<div class="t" style="left:1115.75px;top:521.00px;font-size:8.5px;line-height:8.5px;color:#f2f2ea;font-weight:normal;-webkit-text-stroke:0.12px currentColor;">Vendor V</div>
<div class="t" style="left:1117.87px;top:532.00px;font-size:8.5px;line-height:8.5px;color:#f2f2ea;font-weight:normal;-webkit-text-stroke:0.12px currentColor;">$56,663</div>
<div class="t" style="left:1127.09px;top:543.00px;font-size:8.5px;line-height:8.5px;color:#f2f2ea;font-weight:normal;-webkit-text-stroke:0.12px currentColor;">4%</div>
<div class="t" style="left:1120.80px;top:290.00px;font-size:8.5px;line-height:8.5px;color:#000000;font-weight:normal;-webkit-text-stroke:0.12px currentColor;">$177,072</div>
<div class="t" style="left:1122.61px;top:585.00px;font-size:8.5px;line-height:8.5px;color:#000000;font-weight:normal;-webkit-text-stroke:0.12px currentColor;">Other</div>
<div class="t" style="left:1124.73px;top:619.00px;font-size:8.5px;line-height:8.5px;color:#000000;font-weight:normal;-webkit-text-stroke:0.12px currentColor;">12%</div>
<div class="t" style="left:1169.50px;top:282.00px;font-size:8.5px;line-height:8.5px;color:#000000;font-weight:normal;-webkit-text-stroke:0.12px currentColor;">Total =</div>
<div class="t" style="left:1169.50px;top:294.00px;font-size:8.5px;line-height:8.5px;color:#000000;font-weight:normal;transform:scaleX(0.9754);-webkit-text-stroke:0.12px currentColor;">$1,475,600</div>
<div class="t" style="left:633.00px;top:619.00px;font-size:8.5px;line-height:8.5px;color:#000000;font-weight:normal;transform:scaleX(0.9954);-webkit-text-stroke:0.12px currentColor;">% of Total</div>
<div class="t" style="left:663.75px;top:300.00px;font-size:8.5px;line-height:8.5px;color:#000000;font-weight:normal;-webkit-text-stroke:0.12px currentColor;">100%</div>
<div class="r" style="left:686px;top:302.75px;width:4px;height:1.5px;background:#111;"></div>
<div class="t" style="left:676.03px;top:355.00px;font-size:8.5px;line-height:8.5px;color:#000000;font-weight:normal;-webkit-text-stroke:0.12px currentColor;">80</div>
<div class="r" style="left:686px;top:358.05px;width:4px;height:1.5px;background:#111;"></div>
<div class="t" style="left:676.03px;top:410.00px;font-size:8.5px;line-height:8.5px;color:#000000;font-weight:normal;-webkit-text-stroke:0.12px currentColor;">60</div>
<div class="r" style="left:686px;top:413.35px;width:4px;height:1.5px;background:#111;"></div>
<div class="t" style="left:676.03px;top:466.00px;font-size:8.5px;line-height:8.5px;color:#000000;font-weight:normal;-webkit-text-stroke:0.12px currentColor;">40</div>
<div class="r" style="left:686px;top:468.65px;width:4px;height:1.5px;background:#111;"></div>
<div class="t" style="left:676.03px;top:521.00px;font-size:8.5px;line-height:8.5px;color:#000000;font-weight:normal;-webkit-text-stroke:0.12px currentColor;">20</div>
<div class="r" style="left:686px;top:523.95px;width:4px;height:1.5px;background:#111;"></div>
<div class="t" style="left:680.77px;top:576.00px;font-size:8.5px;line-height:8.5px;color:#000000;font-weight:normal;-webkit-text-stroke:0.12px currentColor;">0</div>
<div class="r" style="left:686px;top:579.25px;width:4px;height:1.5px;background:#111;"></div>
<div class="r" style="left:689px;top:302.5px;width:473.5px;height:2.0px;background:repeating-linear-gradient(90deg,#111 0 1px,#777 1px 2px);"></div>
<div class="r" style="left:689px;top:579px;width:473.5px;height:2px;background:repeating-linear-gradient(90deg,#111 0 1px,#777 1px 2px);"></div>
<div class="r" style="left:689px;top:302.5px;width:2px;height:278.5px;background:repeating-linear-gradient(180deg,#111 0 1px,#777 1px 2px);"></div>
<div class="r" style="left:1160.5px;top:302.5px;width:2.0px;height:278.5px;background:repeating-linear-gradient(180deg,#111 0 1px,#777 1px 2px);"></div>
<div class="r" style="left:647px;top:277.5px;width:551px;height:1.0px;background:repeating-linear-gradient(90deg,#5a5a5a 0 3px,transparent 3px 5px);"></div>
<div class="r" style="left:647px;top:303px;width:42px;height:1px;background:repeating-linear-gradient(90deg,#5a5a5a 0 3px,transparent 3px 5px);"></div>
<div class="r" style="left:1162px;top:303px;width:36px;height:1px;background:repeating-linear-gradient(90deg,#5a5a5a 0 3px,transparent 3px 5px);"></div>
<div class="r" style="left:647px;top:579.8px;width:42px;height:1.0px;background:repeating-linear-gradient(90deg,#5a5a5a 0 3px,transparent 3px 5px);"></div>
<div class="r" style="left:1162px;top:579.8px;width:36px;height:1.0px;background:repeating-linear-gradient(90deg,#5a5a5a 0 3px,transparent 3px 5px);"></div>
<div class="r" style="left:647px;top:609.6px;width:8px;height:1.0px;background:repeating-linear-gradient(90deg,#5a5a5a 0 3px,transparent 3px 5px);"></div>
<div class="r" style="left:655px;top:609.6px;width:543px;height:1.0px;background:#7a7e8a;"></div>
<div class="r" style="left:647px;top:635.8px;width:551px;height:1.0px;background:repeating-linear-gradient(90deg,#5a5a5a 0 3px,transparent 3px 5px);"></div>
<div class="r" style="left:689.8px;top:251px;width:1.0px;height:52px;background:repeating-linear-gradient(180deg,#5a5a5a 0 3px,transparent 3px 5px);"></div>
<div class="r" style="left:689.8px;top:581px;width:1.0px;height:64px;background:repeating-linear-gradient(180deg,#5a5a5a 0 3px,transparent 3px 5px);"></div>
<div class="r" style="left:1160.8px;top:251px;width:1.0px;height:52px;background:repeating-linear-gradient(180deg,#5a5a5a 0 3px,transparent 3px 5px);"></div>
<div class="r" style="left:1160.8px;top:581px;width:1.0px;height:64px;background:repeating-linear-gradient(180deg,#5a5a5a 0 3px,transparent 3px 5px);"></div>
<div class="r" style="left:686px;top:235px;width:8px;height:16px;background-color:#bcc3cc;background-image:linear-gradient(45deg,#717c8e 25%,transparent 25%,transparent 75%,#717c8e 75%),linear-gradient(45deg,#717c8e 25%,transparent 25%,transparent 75%,#717c8e 75%);background-size:4px 4px;background-position:0 0,2px 2px;"></div>
<div class="r" style="left:1157px;top:235px;width:8px;height:16px;background-color:#bcc3cc;background-image:linear-gradient(45deg,#717c8e 25%,transparent 25%,transparent 75%,#717c8e 75%),linear-gradient(45deg,#717c8e 25%,transparent 25%,transparent 75%,#717c8e 75%);background-size:4px 4px;background-position:0 0,2px 2px;"></div>
<div class="r" style="left:1210px;top:235px;width:4px;height:16px;background-color:#bcc3cc;background-image:linear-gradient(45deg,#717c8e 25%,transparent 25%,transparent 75%,#717c8e 75%),linear-gradient(45deg,#717c8e 25%,transparent 25%,transparent 75%,#717c8e 75%);background-size:4px 4px;background-position:0 0,2px 2px;"></div>
<div class="r" style="left:631px;top:274px;width:16px;height:8px;background-color:#bcc3cc;background-image:linear-gradient(45deg,#717c8e 25%,transparent 25%,transparent 75%,#717c8e 75%),linear-gradient(45deg,#717c8e 25%,transparent 25%,transparent 75%,#717c8e 75%);background-size:4px 4px;background-position:0 0,2px 2px;"></div>
<div class="r" style="left:631px;top:300px;width:16px;height:8px;background-color:#bcc3cc;background-image:linear-gradient(45deg,#717c8e 25%,transparent 25%,transparent 75%,#717c8e 75%),linear-gradient(45deg,#717c8e 25%,transparent 25%,transparent 75%,#717c8e 75%);background-size:4px 4px;background-position:0 0,2px 2px;"></div>
<div class="r" style="left:631px;top:576px;width:16px;height:8px;background-color:#bcc3cc;background-image:linear-gradient(45deg,#717c8e 25%,transparent 25%,transparent 75%,#717c8e 75%),linear-gradient(45deg,#717c8e 25%,transparent 25%,transparent 75%,#717c8e 75%);background-size:4px 4px;background-position:0 0,2px 2px;"></div>
<div class="r" style="left:631px;top:606px;width:16px;height:8px;background-color:#bcc3cc;background-image:linear-gradient(45deg,#717c8e 25%,transparent 25%,transparent 75%,#717c8e 75%),linear-gradient(45deg,#717c8e 25%,transparent 25%,transparent 75%,#717c8e 75%);background-size:4px 4px;background-position:0 0,2px 2px;"></div>
<div class="r" style="left:631px;top:632px;width:16px;height:8px;background-color:#bcc3cc;background-image:linear-gradient(45deg,#717c8e 25%,transparent 25%,transparent 75%,#717c8e 75%),linear-gradient(45deg,#717c8e 25%,transparent 25%,transparent 75%,#717c8e 75%);background-size:4px 4px;background-position:0 0,2px 2px;"></div>
<div class="r" style="left:1198px;top:274px;width:16px;height:8px;background-color:#bcc3cc;background-image:linear-gradient(45deg,#717c8e 25%,transparent 25%,transparent 75%,#717c8e 75%),linear-gradient(45deg,#717c8e 25%,transparent 25%,transparent 75%,#717c8e 75%);background-size:4px 4px;background-position:0 0,2px 2px;"></div>
<div class="r" style="left:1198px;top:300px;width:16px;height:8px;background-color:#bcc3cc;background-image:linear-gradient(45deg,#717c8e 25%,transparent 25%,transparent 75%,#717c8e 75%),linear-gradient(45deg,#717c8e 25%,transparent 25%,transparent 75%,#717c8e 75%);background-size:4px 4px;background-position:0 0,2px 2px;"></div>
<div class="r" style="left:1198px;top:576px;width:16px;height:8px;background-color:#bcc3cc;background-image:linear-gradient(45deg,#717c8e 25%,transparent 25%,transparent 75%,#717c8e 75%),linear-gradient(45deg,#717c8e 25%,transparent 25%,transparent 75%,#717c8e 75%);background-size:4px 4px;background-position:0 0,2px 2px;"></div>
<div class="r" style="left:1198px;top:606px;width:16px;height:8px;background-color:#bcc3cc;background-image:linear-gradient(45deg,#717c8e 25%,transparent 25%,transparent 75%,#717c8e 75%),linear-gradient(45deg,#717c8e 25%,transparent 25%,transparent 75%,#717c8e 75%);background-size:4px 4px;background-position:0 0,2px 2px;"></div>
<div class="r" style="left:1198px;top:632px;width:16px;height:8px;background-color:#bcc3cc;background-image:linear-gradient(45deg,#717c8e 25%,transparent 25%,transparent 75%,#717c8e 75%),linear-gradient(45deg,#717c8e 25%,transparent 25%,transparent 75%,#717c8e 75%);background-size:4px 4px;background-position:0 0,2px 2px;"></div>
<div class="r" style="left:686px;top:645px;width:8px;height:16px;background-color:#bcc3cc;background-image:linear-gradient(45deg,#717c8e 25%,transparent 25%,transparent 75%,#717c8e 75%),linear-gradient(45deg,#717c8e 25%,transparent 25%,transparent 75%,#717c8e 75%);background-size:4px 4px;background-position:0 0,2px 2px;"></div>
<div class="r" style="left:1157px;top:645px;width:8px;height:6px;background-color:#bcc3cc;background-image:linear-gradient(45deg,#717c8e 25%,transparent 25%,transparent 75%,#717c8e 75%),linear-gradient(45deg,#717c8e 25%,transparent 25%,transparent 75%,#717c8e 75%);background-size:4px 4px;background-position:0 0,2px 2px;"></div>
<div class="r" style="left:1210px;top:645px;width:4px;height:6px;background-color:#bcc3cc;background-image:linear-gradient(45deg,#717c8e 25%,transparent 25%,transparent 75%,#717c8e 75%),linear-gradient(45deg,#717c8e 25%,transparent 25%,transparent 75%,#717c8e 75%);background-size:4px 4px;background-position:0 0,2px 2px;"></div>
<svg class="r" style="left:1044px;top:288px;" width="4" height="4" viewBox="0 0 4 4"><path d="M0 0 H4 L0 4 Z" fill="#3a3fc4"/></svg>
<svg class="r" style="left:1077px;top:288px;" width="4" height="4" viewBox="0 0 4 4"><path d="M0 0 H4 V4 Z" fill="#3a3fc4"/></svg>
<svg class="r" style="left:1044px;top:297px;" width="4" height="4" viewBox="0 0 4 4"><path d="M0 0 V4 H4 Z" fill="#3a3fc4"/></svg>
<svg class="r" style="left:1077px;top:297px;" width="4" height="4" viewBox="0 0 4 4"><path d="M4 0 V4 H0 Z" fill="#3a3fc4"/></svg>
<svg class="r" style="left:1084px;top:288px;" width="4" height="4" viewBox="0 0 4 4"><path d="M0 0 H4 L0 4 Z" fill="#3a3fc4"/></svg>
<svg class="r" style="left:1114px;top:288px;" width="4" height="4" viewBox="0 0 4 4"><path d="M0 0 H4 V4 Z" fill="#3a3fc4"/></svg>
<svg class="r" style="left:1084px;top:297px;" width="4" height="4" viewBox="0 0 4 4"><path d="M0 0 V4 H4 Z" fill="#3a3fc4"/></svg>
<svg class="r" style="left:1114px;top:297px;" width="4" height="4" viewBox="0 0 4 4"><path d="M4 0 V4 H0 Z" fill="#3a3fc4"/></svg>
<svg class="r" style="left:1120px;top:288px;" width="4" height="4" viewBox="0 0 4 4"><path d="M0 0 H4 L0 4 Z" fill="#3a3fc4"/></svg>
<svg class="r" style="left:1153px;top:288px;" width="4" height="4" viewBox="0 0 4 4"><path d="M0 0 H4 V4 Z" fill="#3a3fc4"/></svg>
<svg class="r" style="left:1120px;top:297px;" width="4" height="4" viewBox="0 0 4 4"><path d="M0 0 V4 H4 Z" fill="#3a3fc4"/></svg>
<svg class="r" style="left:1153px;top:297px;" width="4" height="4" viewBox="0 0 4 4"><path d="M4 0 V4 H0 Z" fill="#3a3fc4"/></svg>
<svg class="r" style="left:1169px;top:280.5px;" width="4" height="4" viewBox="0 0 4 4"><path d="M0 0 H4 L0 4 Z" fill="#3a3fc4"/></svg>
<svg class="r" style="left:1209px;top:280.5px;" width="4" height="4" viewBox="0 0 4 4"><path d="M0 0 H4 V4 Z" fill="#3a3fc4"/></svg>
<svg class="r" style="left:1169px;top:300px;" width="4" height="4" viewBox="0 0 4 4"><path d="M0 0 V4 H4 Z" fill="#3a3fc4"/></svg>
<svg class="r" style="left:1209px;top:300px;" width="4" height="4" viewBox="0 0 4 4"><path d="M4 0 V4 H0 Z" fill="#3a3fc4"/></svg>
<svg class="r" style="left:633.5px;top:617.5px;" width="4" height="4" viewBox="0 0 4 4"><path d="M0 0 H4 L0 4 Z" fill="#3a3fc4"/></svg>
<svg class="r" style="left:668px;top:617.5px;" width="4" height="4" viewBox="0 0 4 4"><path d="M0 0 H4 V4 Z" fill="#3a3fc4"/></svg>
<svg class="r" style="left:633.5px;top:626px;" width="4" height="4" viewBox="0 0 4 4"><path d="M0 0 V4 H4 Z" fill="#3a3fc4"/></svg>
<svg class="r" style="left:668px;top:626px;" width="4" height="4" viewBox="0 0 4 4"><path d="M4 0 V4 H0 Z" fill="#3a3fc4"/></svg>
<div class="r" style="left:913px;top:232.5px;width:2px;height:1.0px;background:#8a8a8a;"></div>
<div class="r" style="left:627px;top:440px;width:2px;height:1px;background:#8a8a8a;"></div>
<div class="r" style="left:1216px;top:438px;width:2px;height:1px;background:#8a8a8a;"></div>
<div class="r" style="left:917px;top:232.5px;width:2px;height:1.0px;background:#8a8a8a;"></div>
<div class="r" style="left:627px;top:444px;width:2px;height:1px;background:#8a8a8a;"></div>
<div class="r" style="left:1216px;top:442px;width:2px;height:1px;background:#8a8a8a;"></div>
<div class="r" style="left:921px;top:232.5px;width:2px;height:1.0px;background:#8a8a8a;"></div>
<div class="r" style="left:627px;top:448px;width:2px;height:1px;background:#8a8a8a;"></div>
<div class="r" style="left:1216px;top:446px;width:2px;height:1px;background:#8a8a8a;"></div>
<div class="r" style="left:925px;top:232.5px;width:2px;height:1.0px;background:#8a8a8a;"></div>
<div class="r" style="left:627px;top:452px;width:2px;height:1px;background:#8a8a8a;"></div>
<div class="r" style="left:1216px;top:450px;width:2px;height:1px;background:#8a8a8a;"></div>
<div class="r" style="left:929px;top:232.5px;width:2px;height:1.0px;background:#8a8a8a;"></div>
<div class="r" style="left:627px;top:456px;width:2px;height:1px;background:#8a8a8a;"></div>
<div class="r" style="left:1216px;top:454px;width:2px;height:1px;background:#8a8a8a;"></div>
<div class="r" style="left:630px;top:233.5px;width:2px;height:1.0px;background:#8a8a8a;"></div>
<div class="r" style="left:1203px;top:233.5px;width:2px;height:1.0px;background:#8a8a8a;"></div>
<div class="r" style="left:636px;top:663px;width:2px;height:1px;background:#8a8a8a;"></div>
<div class="r" style="left:626.5px;top:236px;width:1.0px;height:2px;background:#8a8a8a;"></div>
<div class="r" style="left:1216.5px;top:236px;width:1.0px;height:2px;background:#8a8a8a;"></div>
<div class="r" style="left:626.5px;top:650px;width:1.0px;height:2px;background:#8a8a8a;"></div>
<div class="r" style="left:634px;top:233.5px;width:2px;height:1.0px;background:#8a8a8a;"></div>
<div class="r" style="left:1207px;top:233.5px;width:2px;height:1.0px;background:#8a8a8a;"></div>
<div class="r" style="left:640px;top:663px;width:2px;height:1px;background:#8a8a8a;"></div>
<div class="r" style="left:626.5px;top:240px;width:1.0px;height:2px;background:#8a8a8a;"></div>
<div class="r" style="left:1216.5px;top:240px;width:1.0px;height:2px;background:#8a8a8a;"></div>
<div class="r" style="left:626.5px;top:654px;width:1.0px;height:2px;background:#8a8a8a;"></div>
<div class="r" style="left:638px;top:233.5px;width:2px;height:1.0px;background:#8a8a8a;"></div>
<div class="r" style="left:1211px;top:233.5px;width:2px;height:1.0px;background:#8a8a8a;"></div>
<div class="r" style="left:644px;top:663px;width:2px;height:1px;background:#8a8a8a;"></div>
<div class="r" style="left:626.5px;top:244px;width:1.0px;height:2px;background:#8a8a8a;"></div>
<div class="r" style="left:1216.5px;top:244px;width:1.0px;height:2px;background:#8a8a8a;"></div>
<div class="r" style="left:626.5px;top:658px;width:1.0px;height:2px;background:#8a8a8a;"></div>
<div class="r" style="left:0px;top:647px;width:625px;height:23px;background:#e6e6e6;"></div>
<div class="r" style="left:1219px;top:647px;width:121px;height:23px;background:#e6e6e6;"></div>
<div class="r" style="left:625px;top:661px;width:180px;height:9px;background:#e6e6e6;"></div>
<div class="r" style="left:805px;top:646px;width:29px;height:24px;background:#e0e0e0;"></div>
<div class="r" style="left:818px;top:654px;width:2px;height:2px;background:#a0a0a0;"></div>
<div class="r" style="left:818px;top:659px;width:2px;height:2px;background:#a0a0a0;"></div>
<div class="r" style="left:818px;top:664px;width:2px;height:2px;background:#a0a0a0;"></div>
<div class="r" style="left:834px;top:651px;width:506px;height:19px;background:#e6e6e6;"></div>
<div class="r" style="left:835px;top:652px;width:14px;height:15px;background:#ffffff;border:1px solid #a6a6a6;box-sizing:border-box;"></div>
<svg class="r" style="left:838px;top:655px;" width="8" height="9" viewBox="0 0 8 9"><path d="M6 0.5 V8.5 L1.5 4.5 Z" fill="#666"/></svg>
<div class="r" style="left:849px;top:652px;width:457px;height:15px;background:#ffffff;border:1px solid #a6a6a6;box-sizing:border-box;"></div>
<div class="r" style="left:1306px;top:652px;width:24px;height:15px;background:#d6d6d6;"></div>
<div class="r" style="left:1331px;top:652px;width:14px;height:15px;background:#ffffff;border:1px solid #a6a6a6;box-sizing:border-box;"></div>
<svg class="r" style="left:1336px;top:655px;" width="8" height="9" viewBox="0 0 8 9"><path d="M1.5 0.5 V8.5 L6 4.5 Z" fill="#666"/></svg>
<div class="r" style="left:99px;top:645px;width:65px;height:25px;background:#ffffff;"></div>
<div class="r" style="left:99px;top:645px;width:1px;height:25px;background:#a8a8a8;"></div>
<div class="r" style="left:163px;top:645px;width:1px;height:25px;background:#a8a8a8;"></div>
<div class="r" style="left:100px;top:667.5px;width:63px;height:2.5px;background:#217346;"></div>
<div class="t" style="left:111.00px;top:653.00px;font-size:12.5px;line-height:12.5px;color:#217346;font-weight:bold;transform:scaleX(0.9756);">Sheet1</div>
<svg class="r" style="left:23px;top:652px;" width="10" height="12" viewBox="0 0 10 12"><path d="M7 1 L2 6 L7 11 Z" fill="#c6c6c6"/></svg>
<svg class="r" style="left:51px;top:652px;" width="10" height="12" viewBox="0 0 10 12"><path d="M3 1 L8 6 L3 11 Z" fill="#c6c6c6"/></svg>
<svg class="r" style="left:196px;top:649px;" width="19" height="19" viewBox="0 0 19 19"><circle cx="9.3" cy="9.6" r="7.4" fill="none" stroke="#7a7a7a" stroke-width="1.1"/><path d="M9.3 5.3 V13.9 M5 9.6 H13.6" stroke="#6a6a6a" stroke-width="1.9"/></svg>
</body></html>
